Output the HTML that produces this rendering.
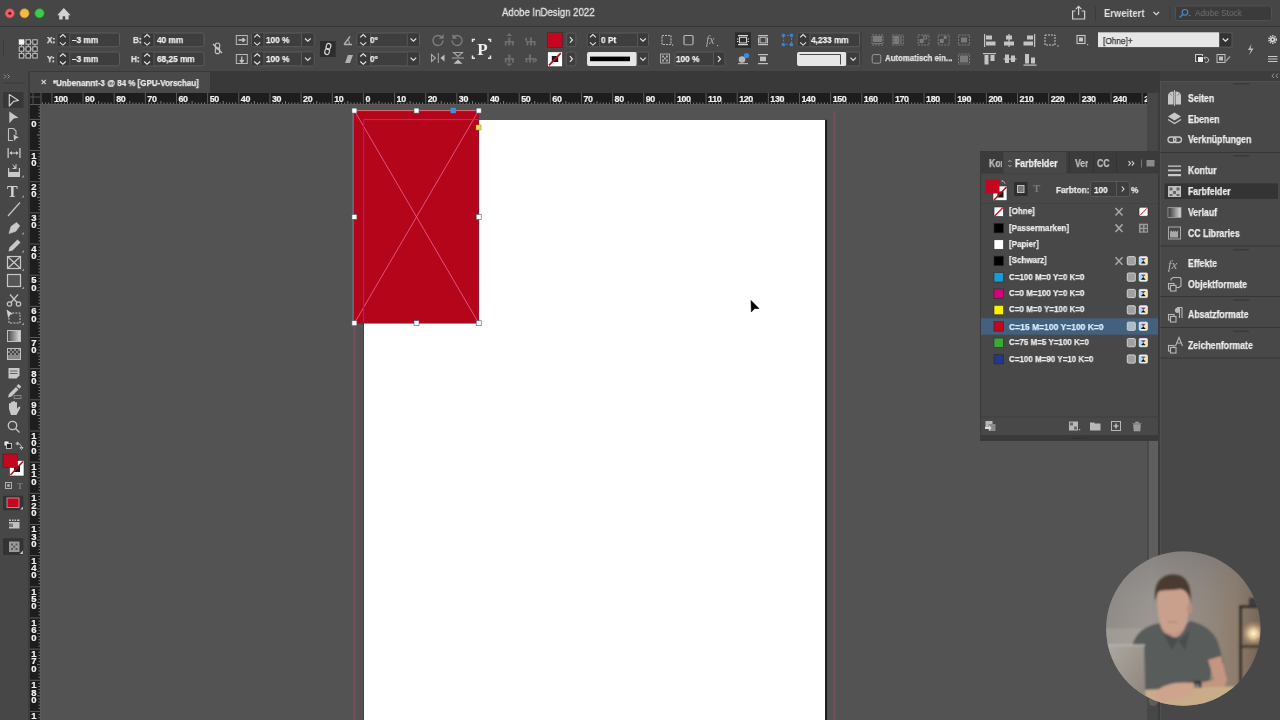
<!DOCTYPE html>
<html><head><meta charset="utf-8">
<style>
*{margin:0;padding:0;box-sizing:border-box}
html,body{width:1280px;height:720px;overflow:hidden;background:#535353;font-family:"Liberation Sans",sans-serif;color:#e8e8e8;position:relative}
.a{position:absolute}
.t{position:absolute;white-space:nowrap;line-height:1}
svg{overflow:visible;will-change:transform}
.t,.lbl{will-change:transform}
.lbl{-webkit-text-stroke:0.25px currentColor}
#title{left:0;top:0;width:1280px;height:27px;background:#464646}
#tsep{left:0;top:26px;width:1280px;height:1px;background:#353535}
#ctrl{left:0;top:27px;width:1280px;height:44px;background:#474747}
#tabrow{left:0;top:71px;width:1160px;height:22px;background:#393939}
#tab{left:30px;top:72px;width:180px;height:21px;background:#494949}
#tools{left:0;top:71px;width:28px;height:649px;background:#474747}
#tb{left:28px;top:71px;width:2px;height:649px;background:#3c3c3c}
#scroll{left:1147px;top:93px;width:13px;height:627px;background:#474747;border-right:2px solid #3c3c3c}
#thumb{left:1147.5px;top:200px;width:10.5px;height:506px;background:#5e5e5e;border-radius:5px;border-left:1px solid #4c4c4c}
#dock{left:1160px;top:71px;width:120px;height:649px;background:#3d3d3d}
#dockin{left:1160px;top:81px;width:120px;height:639px;background:#484848;border-left:1px solid #505050;border-top:1px solid #505050}
.box{position:absolute;background:#3d3d3d;border:1px solid #545454;border-radius:2px}
.lbl{position:absolute;font-size:9.5px;font-weight:bold;color:#f0f0f0;white-space:nowrap;line-height:1;transform:scaleX(.87);transform-origin:0 0}
.ico{position:absolute}
</style></head><body>
<div id="title" class="a"></div>
<div id="tsep" class="a"></div>
<div id="ctrl" class="a"></div>
<div id="tabrow" class="a"></div>
<div id="tab" class="a"></div>
<div id="tools" class="a"></div>
<div id="tb" class="a"></div>
<svg class="a" style="left:30px;top:93px" width="1117" height="12" viewBox="30 93 1117 12">
<rect x="30" y="93" width="1117" height="12" fill="#1d1d1d"/>
<rect x="30" y="104" width="1117" height="1" fill="#5a5a5a"/>
<rect x="51.40" y="93" width="1" height="12" fill="#5c5c5c"/>
<rect x="82.55" y="93" width="1" height="12" fill="#5c5c5c"/>
<rect x="113.70" y="93" width="1" height="12" fill="#5c5c5c"/>
<rect x="144.85" y="93" width="1" height="12" fill="#5c5c5c"/>
<rect x="176.00" y="93" width="1" height="12" fill="#5c5c5c"/>
<rect x="207.15" y="93" width="1" height="12" fill="#5c5c5c"/>
<rect x="238.30" y="93" width="1" height="12" fill="#5c5c5c"/>
<rect x="269.45" y="93" width="1" height="12" fill="#5c5c5c"/>
<rect x="300.60" y="93" width="1" height="12" fill="#5c5c5c"/>
<rect x="331.75" y="93" width="1" height="12" fill="#5c5c5c"/>
<rect x="362.90" y="93" width="1" height="12" fill="#5c5c5c"/>
<rect x="394.05" y="93" width="1" height="12" fill="#5c5c5c"/>
<rect x="425.20" y="93" width="1" height="12" fill="#5c5c5c"/>
<rect x="456.35" y="93" width="1" height="12" fill="#5c5c5c"/>
<rect x="487.50" y="93" width="1" height="12" fill="#5c5c5c"/>
<rect x="518.65" y="93" width="1" height="12" fill="#5c5c5c"/>
<rect x="549.80" y="93" width="1" height="12" fill="#5c5c5c"/>
<rect x="580.95" y="93" width="1" height="12" fill="#5c5c5c"/>
<rect x="612.10" y="93" width="1" height="12" fill="#5c5c5c"/>
<rect x="643.25" y="93" width="1" height="12" fill="#5c5c5c"/>
<rect x="674.40" y="93" width="1" height="12" fill="#5c5c5c"/>
<rect x="705.55" y="93" width="1" height="12" fill="#5c5c5c"/>
<rect x="736.70" y="93" width="1" height="12" fill="#5c5c5c"/>
<rect x="767.85" y="93" width="1" height="12" fill="#5c5c5c"/>
<rect x="799.00" y="93" width="1" height="12" fill="#5c5c5c"/>
<rect x="830.15" y="93" width="1" height="12" fill="#5c5c5c"/>
<rect x="861.30" y="93" width="1" height="12" fill="#5c5c5c"/>
<rect x="892.45" y="93" width="1" height="12" fill="#5c5c5c"/>
<rect x="923.60" y="93" width="1" height="12" fill="#5c5c5c"/>
<rect x="954.75" y="93" width="1" height="12" fill="#5c5c5c"/>
<rect x="985.90" y="93" width="1" height="12" fill="#5c5c5c"/>
<rect x="1017.05" y="93" width="1" height="12" fill="#5c5c5c"/>
<rect x="1048.20" y="93" width="1" height="12" fill="#5c5c5c"/>
<rect x="1079.35" y="93" width="1" height="12" fill="#5c5c5c"/>
<rect x="1110.50" y="93" width="1" height="12" fill="#5c5c5c"/>
<rect x="1141.65" y="93" width="1" height="12" fill="#5c5c5c"/>
<rect x="42.06" y="102.5" width="1" height="1.5" fill="#7a7a7a"/>
<rect x="45.17" y="102.5" width="1" height="1.5" fill="#7a7a7a"/>
<rect x="48.29" y="102.5" width="1" height="1.5" fill="#7a7a7a"/>
<rect x="54.51" y="102.5" width="1" height="1.5" fill="#7a7a7a"/>
<rect x="57.63" y="102.5" width="1" height="1.5" fill="#7a7a7a"/>
<rect x="60.75" y="102.5" width="1" height="1.5" fill="#7a7a7a"/>
<rect x="63.86" y="102.5" width="1" height="1.5" fill="#7a7a7a"/>
<rect x="66.97" y="101" width="1" height="3" fill="#7a7a7a"/>
<rect x="70.09" y="102.5" width="1" height="1.5" fill="#7a7a7a"/>
<rect x="73.20" y="102.5" width="1" height="1.5" fill="#7a7a7a"/>
<rect x="76.32" y="102.5" width="1" height="1.5" fill="#7a7a7a"/>
<rect x="79.43" y="102.5" width="1" height="1.5" fill="#7a7a7a"/>
<rect x="85.66" y="102.5" width="1" height="1.5" fill="#7a7a7a"/>
<rect x="88.78" y="102.5" width="1" height="1.5" fill="#7a7a7a"/>
<rect x="91.89" y="102.5" width="1" height="1.5" fill="#7a7a7a"/>
<rect x="95.01" y="102.5" width="1" height="1.5" fill="#7a7a7a"/>
<rect x="98.12" y="101" width="1" height="3" fill="#7a7a7a"/>
<rect x="101.24" y="102.5" width="1" height="1.5" fill="#7a7a7a"/>
<rect x="104.36" y="102.5" width="1" height="1.5" fill="#7a7a7a"/>
<rect x="107.47" y="102.5" width="1" height="1.5" fill="#7a7a7a"/>
<rect x="110.58" y="102.5" width="1" height="1.5" fill="#7a7a7a"/>
<rect x="116.81" y="102.5" width="1" height="1.5" fill="#7a7a7a"/>
<rect x="119.93" y="102.5" width="1" height="1.5" fill="#7a7a7a"/>
<rect x="123.05" y="102.5" width="1" height="1.5" fill="#7a7a7a"/>
<rect x="126.16" y="102.5" width="1" height="1.5" fill="#7a7a7a"/>
<rect x="129.27" y="101" width="1" height="3" fill="#7a7a7a"/>
<rect x="132.39" y="102.5" width="1" height="1.5" fill="#7a7a7a"/>
<rect x="135.50" y="102.5" width="1" height="1.5" fill="#7a7a7a"/>
<rect x="138.62" y="102.5" width="1" height="1.5" fill="#7a7a7a"/>
<rect x="141.73" y="102.5" width="1" height="1.5" fill="#7a7a7a"/>
<rect x="147.96" y="102.5" width="1" height="1.5" fill="#7a7a7a"/>
<rect x="151.08" y="102.5" width="1" height="1.5" fill="#7a7a7a"/>
<rect x="154.19" y="102.5" width="1" height="1.5" fill="#7a7a7a"/>
<rect x="157.31" y="102.5" width="1" height="1.5" fill="#7a7a7a"/>
<rect x="160.42" y="101" width="1" height="3" fill="#7a7a7a"/>
<rect x="163.54" y="102.5" width="1" height="1.5" fill="#7a7a7a"/>
<rect x="166.66" y="102.5" width="1" height="1.5" fill="#7a7a7a"/>
<rect x="169.77" y="102.5" width="1" height="1.5" fill="#7a7a7a"/>
<rect x="172.88" y="102.5" width="1" height="1.5" fill="#7a7a7a"/>
<rect x="179.11" y="102.5" width="1" height="1.5" fill="#7a7a7a"/>
<rect x="182.23" y="102.5" width="1" height="1.5" fill="#7a7a7a"/>
<rect x="185.34" y="102.5" width="1" height="1.5" fill="#7a7a7a"/>
<rect x="188.46" y="102.5" width="1" height="1.5" fill="#7a7a7a"/>
<rect x="191.57" y="101" width="1" height="3" fill="#7a7a7a"/>
<rect x="194.69" y="102.5" width="1" height="1.5" fill="#7a7a7a"/>
<rect x="197.81" y="102.5" width="1" height="1.5" fill="#7a7a7a"/>
<rect x="200.92" y="102.5" width="1" height="1.5" fill="#7a7a7a"/>
<rect x="204.03" y="102.5" width="1" height="1.5" fill="#7a7a7a"/>
<rect x="210.26" y="102.5" width="1" height="1.5" fill="#7a7a7a"/>
<rect x="213.38" y="102.5" width="1" height="1.5" fill="#7a7a7a"/>
<rect x="216.49" y="102.5" width="1" height="1.5" fill="#7a7a7a"/>
<rect x="219.61" y="102.5" width="1" height="1.5" fill="#7a7a7a"/>
<rect x="222.72" y="101" width="1" height="3" fill="#7a7a7a"/>
<rect x="225.84" y="102.5" width="1" height="1.5" fill="#7a7a7a"/>
<rect x="228.95" y="102.5" width="1" height="1.5" fill="#7a7a7a"/>
<rect x="232.07" y="102.5" width="1" height="1.5" fill="#7a7a7a"/>
<rect x="235.19" y="102.5" width="1" height="1.5" fill="#7a7a7a"/>
<rect x="241.41" y="102.5" width="1" height="1.5" fill="#7a7a7a"/>
<rect x="244.53" y="102.5" width="1" height="1.5" fill="#7a7a7a"/>
<rect x="247.64" y="102.5" width="1" height="1.5" fill="#7a7a7a"/>
<rect x="250.76" y="102.5" width="1" height="1.5" fill="#7a7a7a"/>
<rect x="253.87" y="101" width="1" height="3" fill="#7a7a7a"/>
<rect x="256.99" y="102.5" width="1" height="1.5" fill="#7a7a7a"/>
<rect x="260.10" y="102.5" width="1" height="1.5" fill="#7a7a7a"/>
<rect x="263.22" y="102.5" width="1" height="1.5" fill="#7a7a7a"/>
<rect x="266.33" y="102.5" width="1" height="1.5" fill="#7a7a7a"/>
<rect x="272.56" y="102.5" width="1" height="1.5" fill="#7a7a7a"/>
<rect x="275.68" y="102.5" width="1" height="1.5" fill="#7a7a7a"/>
<rect x="278.79" y="102.5" width="1" height="1.5" fill="#7a7a7a"/>
<rect x="281.91" y="102.5" width="1" height="1.5" fill="#7a7a7a"/>
<rect x="285.02" y="101" width="1" height="3" fill="#7a7a7a"/>
<rect x="288.14" y="102.5" width="1" height="1.5" fill="#7a7a7a"/>
<rect x="291.25" y="102.5" width="1" height="1.5" fill="#7a7a7a"/>
<rect x="294.37" y="102.5" width="1" height="1.5" fill="#7a7a7a"/>
<rect x="297.49" y="102.5" width="1" height="1.5" fill="#7a7a7a"/>
<rect x="303.71" y="102.5" width="1" height="1.5" fill="#7a7a7a"/>
<rect x="306.83" y="102.5" width="1" height="1.5" fill="#7a7a7a"/>
<rect x="309.94" y="102.5" width="1" height="1.5" fill="#7a7a7a"/>
<rect x="313.06" y="102.5" width="1" height="1.5" fill="#7a7a7a"/>
<rect x="316.17" y="101" width="1" height="3" fill="#7a7a7a"/>
<rect x="319.29" y="102.5" width="1" height="1.5" fill="#7a7a7a"/>
<rect x="322.40" y="102.5" width="1" height="1.5" fill="#7a7a7a"/>
<rect x="325.52" y="102.5" width="1" height="1.5" fill="#7a7a7a"/>
<rect x="328.63" y="102.5" width="1" height="1.5" fill="#7a7a7a"/>
<rect x="334.87" y="102.5" width="1" height="1.5" fill="#7a7a7a"/>
<rect x="337.98" y="102.5" width="1" height="1.5" fill="#7a7a7a"/>
<rect x="341.09" y="102.5" width="1" height="1.5" fill="#7a7a7a"/>
<rect x="344.21" y="102.5" width="1" height="1.5" fill="#7a7a7a"/>
<rect x="347.32" y="101" width="1" height="3" fill="#7a7a7a"/>
<rect x="350.44" y="102.5" width="1" height="1.5" fill="#7a7a7a"/>
<rect x="353.55" y="102.5" width="1" height="1.5" fill="#7a7a7a"/>
<rect x="356.67" y="102.5" width="1" height="1.5" fill="#7a7a7a"/>
<rect x="359.78" y="102.5" width="1" height="1.5" fill="#7a7a7a"/>
<rect x="366.01" y="102.5" width="1" height="1.5" fill="#7a7a7a"/>
<rect x="369.13" y="102.5" width="1" height="1.5" fill="#7a7a7a"/>
<rect x="372.25" y="102.5" width="1" height="1.5" fill="#7a7a7a"/>
<rect x="375.36" y="102.5" width="1" height="1.5" fill="#7a7a7a"/>
<rect x="378.47" y="101" width="1" height="3" fill="#7a7a7a"/>
<rect x="381.59" y="102.5" width="1" height="1.5" fill="#7a7a7a"/>
<rect x="384.70" y="102.5" width="1" height="1.5" fill="#7a7a7a"/>
<rect x="387.82" y="102.5" width="1" height="1.5" fill="#7a7a7a"/>
<rect x="390.93" y="102.5" width="1" height="1.5" fill="#7a7a7a"/>
<rect x="397.16" y="102.5" width="1" height="1.5" fill="#7a7a7a"/>
<rect x="400.28" y="102.5" width="1" height="1.5" fill="#7a7a7a"/>
<rect x="403.39" y="102.5" width="1" height="1.5" fill="#7a7a7a"/>
<rect x="406.51" y="102.5" width="1" height="1.5" fill="#7a7a7a"/>
<rect x="409.62" y="101" width="1" height="3" fill="#7a7a7a"/>
<rect x="412.74" y="102.5" width="1" height="1.5" fill="#7a7a7a"/>
<rect x="415.85" y="102.5" width="1" height="1.5" fill="#7a7a7a"/>
<rect x="418.97" y="102.5" width="1" height="1.5" fill="#7a7a7a"/>
<rect x="422.08" y="102.5" width="1" height="1.5" fill="#7a7a7a"/>
<rect x="428.31" y="102.5" width="1" height="1.5" fill="#7a7a7a"/>
<rect x="431.43" y="102.5" width="1" height="1.5" fill="#7a7a7a"/>
<rect x="434.54" y="102.5" width="1" height="1.5" fill="#7a7a7a"/>
<rect x="437.66" y="102.5" width="1" height="1.5" fill="#7a7a7a"/>
<rect x="440.77" y="101" width="1" height="3" fill="#7a7a7a"/>
<rect x="443.89" y="102.5" width="1" height="1.5" fill="#7a7a7a"/>
<rect x="447.00" y="102.5" width="1" height="1.5" fill="#7a7a7a"/>
<rect x="450.12" y="102.5" width="1" height="1.5" fill="#7a7a7a"/>
<rect x="453.23" y="102.5" width="1" height="1.5" fill="#7a7a7a"/>
<rect x="459.46" y="102.5" width="1" height="1.5" fill="#7a7a7a"/>
<rect x="462.58" y="102.5" width="1" height="1.5" fill="#7a7a7a"/>
<rect x="465.69" y="102.5" width="1" height="1.5" fill="#7a7a7a"/>
<rect x="468.81" y="102.5" width="1" height="1.5" fill="#7a7a7a"/>
<rect x="471.92" y="101" width="1" height="3" fill="#7a7a7a"/>
<rect x="475.04" y="102.5" width="1" height="1.5" fill="#7a7a7a"/>
<rect x="478.15" y="102.5" width="1" height="1.5" fill="#7a7a7a"/>
<rect x="481.27" y="102.5" width="1" height="1.5" fill="#7a7a7a"/>
<rect x="484.38" y="102.5" width="1" height="1.5" fill="#7a7a7a"/>
<rect x="490.61" y="102.5" width="1" height="1.5" fill="#7a7a7a"/>
<rect x="493.73" y="102.5" width="1" height="1.5" fill="#7a7a7a"/>
<rect x="496.84" y="102.5" width="1" height="1.5" fill="#7a7a7a"/>
<rect x="499.96" y="102.5" width="1" height="1.5" fill="#7a7a7a"/>
<rect x="503.07" y="101" width="1" height="3" fill="#7a7a7a"/>
<rect x="506.19" y="102.5" width="1" height="1.5" fill="#7a7a7a"/>
<rect x="509.30" y="102.5" width="1" height="1.5" fill="#7a7a7a"/>
<rect x="512.42" y="102.5" width="1" height="1.5" fill="#7a7a7a"/>
<rect x="515.53" y="102.5" width="1" height="1.5" fill="#7a7a7a"/>
<rect x="521.76" y="102.5" width="1" height="1.5" fill="#7a7a7a"/>
<rect x="524.88" y="102.5" width="1" height="1.5" fill="#7a7a7a"/>
<rect x="527.99" y="102.5" width="1" height="1.5" fill="#7a7a7a"/>
<rect x="531.11" y="102.5" width="1" height="1.5" fill="#7a7a7a"/>
<rect x="534.22" y="101" width="1" height="3" fill="#7a7a7a"/>
<rect x="537.34" y="102.5" width="1" height="1.5" fill="#7a7a7a"/>
<rect x="540.45" y="102.5" width="1" height="1.5" fill="#7a7a7a"/>
<rect x="543.57" y="102.5" width="1" height="1.5" fill="#7a7a7a"/>
<rect x="546.68" y="102.5" width="1" height="1.5" fill="#7a7a7a"/>
<rect x="552.91" y="102.5" width="1" height="1.5" fill="#7a7a7a"/>
<rect x="556.03" y="102.5" width="1" height="1.5" fill="#7a7a7a"/>
<rect x="559.14" y="102.5" width="1" height="1.5" fill="#7a7a7a"/>
<rect x="562.26" y="102.5" width="1" height="1.5" fill="#7a7a7a"/>
<rect x="565.38" y="101" width="1" height="3" fill="#7a7a7a"/>
<rect x="568.49" y="102.5" width="1" height="1.5" fill="#7a7a7a"/>
<rect x="571.61" y="102.5" width="1" height="1.5" fill="#7a7a7a"/>
<rect x="574.72" y="102.5" width="1" height="1.5" fill="#7a7a7a"/>
<rect x="577.84" y="102.5" width="1" height="1.5" fill="#7a7a7a"/>
<rect x="584.07" y="102.5" width="1" height="1.5" fill="#7a7a7a"/>
<rect x="587.18" y="102.5" width="1" height="1.5" fill="#7a7a7a"/>
<rect x="590.29" y="102.5" width="1" height="1.5" fill="#7a7a7a"/>
<rect x="593.41" y="102.5" width="1" height="1.5" fill="#7a7a7a"/>
<rect x="596.52" y="101" width="1" height="3" fill="#7a7a7a"/>
<rect x="599.64" y="102.5" width="1" height="1.5" fill="#7a7a7a"/>
<rect x="602.75" y="102.5" width="1" height="1.5" fill="#7a7a7a"/>
<rect x="605.87" y="102.5" width="1" height="1.5" fill="#7a7a7a"/>
<rect x="608.98" y="102.5" width="1" height="1.5" fill="#7a7a7a"/>
<rect x="615.21" y="102.5" width="1" height="1.5" fill="#7a7a7a"/>
<rect x="618.33" y="102.5" width="1" height="1.5" fill="#7a7a7a"/>
<rect x="621.44" y="102.5" width="1" height="1.5" fill="#7a7a7a"/>
<rect x="624.56" y="102.5" width="1" height="1.5" fill="#7a7a7a"/>
<rect x="627.67" y="101" width="1" height="3" fill="#7a7a7a"/>
<rect x="630.79" y="102.5" width="1" height="1.5" fill="#7a7a7a"/>
<rect x="633.90" y="102.5" width="1" height="1.5" fill="#7a7a7a"/>
<rect x="637.02" y="102.5" width="1" height="1.5" fill="#7a7a7a"/>
<rect x="640.13" y="102.5" width="1" height="1.5" fill="#7a7a7a"/>
<rect x="646.37" y="102.5" width="1" height="1.5" fill="#7a7a7a"/>
<rect x="649.48" y="102.5" width="1" height="1.5" fill="#7a7a7a"/>
<rect x="652.60" y="102.5" width="1" height="1.5" fill="#7a7a7a"/>
<rect x="655.71" y="102.5" width="1" height="1.5" fill="#7a7a7a"/>
<rect x="658.83" y="101" width="1" height="3" fill="#7a7a7a"/>
<rect x="661.94" y="102.5" width="1" height="1.5" fill="#7a7a7a"/>
<rect x="665.05" y="102.5" width="1" height="1.5" fill="#7a7a7a"/>
<rect x="668.17" y="102.5" width="1" height="1.5" fill="#7a7a7a"/>
<rect x="671.28" y="102.5" width="1" height="1.5" fill="#7a7a7a"/>
<rect x="677.51" y="102.5" width="1" height="1.5" fill="#7a7a7a"/>
<rect x="680.63" y="102.5" width="1" height="1.5" fill="#7a7a7a"/>
<rect x="683.74" y="102.5" width="1" height="1.5" fill="#7a7a7a"/>
<rect x="686.86" y="102.5" width="1" height="1.5" fill="#7a7a7a"/>
<rect x="689.97" y="101" width="1" height="3" fill="#7a7a7a"/>
<rect x="693.09" y="102.5" width="1" height="1.5" fill="#7a7a7a"/>
<rect x="696.20" y="102.5" width="1" height="1.5" fill="#7a7a7a"/>
<rect x="699.32" y="102.5" width="1" height="1.5" fill="#7a7a7a"/>
<rect x="702.43" y="102.5" width="1" height="1.5" fill="#7a7a7a"/>
<rect x="708.66" y="102.5" width="1" height="1.5" fill="#7a7a7a"/>
<rect x="711.78" y="102.5" width="1" height="1.5" fill="#7a7a7a"/>
<rect x="714.89" y="102.5" width="1" height="1.5" fill="#7a7a7a"/>
<rect x="718.01" y="102.5" width="1" height="1.5" fill="#7a7a7a"/>
<rect x="721.12" y="101" width="1" height="3" fill="#7a7a7a"/>
<rect x="724.24" y="102.5" width="1" height="1.5" fill="#7a7a7a"/>
<rect x="727.36" y="102.5" width="1" height="1.5" fill="#7a7a7a"/>
<rect x="730.47" y="102.5" width="1" height="1.5" fill="#7a7a7a"/>
<rect x="733.59" y="102.5" width="1" height="1.5" fill="#7a7a7a"/>
<rect x="739.81" y="102.5" width="1" height="1.5" fill="#7a7a7a"/>
<rect x="742.93" y="102.5" width="1" height="1.5" fill="#7a7a7a"/>
<rect x="746.04" y="102.5" width="1" height="1.5" fill="#7a7a7a"/>
<rect x="749.16" y="102.5" width="1" height="1.5" fill="#7a7a7a"/>
<rect x="752.27" y="101" width="1" height="3" fill="#7a7a7a"/>
<rect x="755.39" y="102.5" width="1" height="1.5" fill="#7a7a7a"/>
<rect x="758.50" y="102.5" width="1" height="1.5" fill="#7a7a7a"/>
<rect x="761.62" y="102.5" width="1" height="1.5" fill="#7a7a7a"/>
<rect x="764.73" y="102.5" width="1" height="1.5" fill="#7a7a7a"/>
<rect x="770.96" y="102.5" width="1" height="1.5" fill="#7a7a7a"/>
<rect x="774.08" y="102.5" width="1" height="1.5" fill="#7a7a7a"/>
<rect x="777.19" y="102.5" width="1" height="1.5" fill="#7a7a7a"/>
<rect x="780.31" y="102.5" width="1" height="1.5" fill="#7a7a7a"/>
<rect x="783.42" y="101" width="1" height="3" fill="#7a7a7a"/>
<rect x="786.54" y="102.5" width="1" height="1.5" fill="#7a7a7a"/>
<rect x="789.65" y="102.5" width="1" height="1.5" fill="#7a7a7a"/>
<rect x="792.77" y="102.5" width="1" height="1.5" fill="#7a7a7a"/>
<rect x="795.88" y="102.5" width="1" height="1.5" fill="#7a7a7a"/>
<rect x="802.12" y="102.5" width="1" height="1.5" fill="#7a7a7a"/>
<rect x="805.23" y="102.5" width="1" height="1.5" fill="#7a7a7a"/>
<rect x="808.35" y="102.5" width="1" height="1.5" fill="#7a7a7a"/>
<rect x="811.46" y="102.5" width="1" height="1.5" fill="#7a7a7a"/>
<rect x="814.58" y="101" width="1" height="3" fill="#7a7a7a"/>
<rect x="817.69" y="102.5" width="1" height="1.5" fill="#7a7a7a"/>
<rect x="820.81" y="102.5" width="1" height="1.5" fill="#7a7a7a"/>
<rect x="823.92" y="102.5" width="1" height="1.5" fill="#7a7a7a"/>
<rect x="827.03" y="102.5" width="1" height="1.5" fill="#7a7a7a"/>
<rect x="833.26" y="102.5" width="1" height="1.5" fill="#7a7a7a"/>
<rect x="836.38" y="102.5" width="1" height="1.5" fill="#7a7a7a"/>
<rect x="839.49" y="102.5" width="1" height="1.5" fill="#7a7a7a"/>
<rect x="842.61" y="102.5" width="1" height="1.5" fill="#7a7a7a"/>
<rect x="845.72" y="101" width="1" height="3" fill="#7a7a7a"/>
<rect x="848.84" y="102.5" width="1" height="1.5" fill="#7a7a7a"/>
<rect x="851.95" y="102.5" width="1" height="1.5" fill="#7a7a7a"/>
<rect x="855.07" y="102.5" width="1" height="1.5" fill="#7a7a7a"/>
<rect x="858.18" y="102.5" width="1" height="1.5" fill="#7a7a7a"/>
<rect x="864.41" y="102.5" width="1" height="1.5" fill="#7a7a7a"/>
<rect x="867.53" y="102.5" width="1" height="1.5" fill="#7a7a7a"/>
<rect x="870.64" y="102.5" width="1" height="1.5" fill="#7a7a7a"/>
<rect x="873.76" y="102.5" width="1" height="1.5" fill="#7a7a7a"/>
<rect x="876.88" y="101" width="1" height="3" fill="#7a7a7a"/>
<rect x="879.99" y="102.5" width="1" height="1.5" fill="#7a7a7a"/>
<rect x="883.11" y="102.5" width="1" height="1.5" fill="#7a7a7a"/>
<rect x="886.22" y="102.5" width="1" height="1.5" fill="#7a7a7a"/>
<rect x="889.33" y="102.5" width="1" height="1.5" fill="#7a7a7a"/>
<rect x="895.56" y="102.5" width="1" height="1.5" fill="#7a7a7a"/>
<rect x="898.68" y="102.5" width="1" height="1.5" fill="#7a7a7a"/>
<rect x="901.79" y="102.5" width="1" height="1.5" fill="#7a7a7a"/>
<rect x="904.91" y="102.5" width="1" height="1.5" fill="#7a7a7a"/>
<rect x="908.02" y="101" width="1" height="3" fill="#7a7a7a"/>
<rect x="911.14" y="102.5" width="1" height="1.5" fill="#7a7a7a"/>
<rect x="914.25" y="102.5" width="1" height="1.5" fill="#7a7a7a"/>
<rect x="917.37" y="102.5" width="1" height="1.5" fill="#7a7a7a"/>
<rect x="920.48" y="102.5" width="1" height="1.5" fill="#7a7a7a"/>
<rect x="926.71" y="102.5" width="1" height="1.5" fill="#7a7a7a"/>
<rect x="929.83" y="102.5" width="1" height="1.5" fill="#7a7a7a"/>
<rect x="932.94" y="102.5" width="1" height="1.5" fill="#7a7a7a"/>
<rect x="936.06" y="102.5" width="1" height="1.5" fill="#7a7a7a"/>
<rect x="939.17" y="101" width="1" height="3" fill="#7a7a7a"/>
<rect x="942.29" y="102.5" width="1" height="1.5" fill="#7a7a7a"/>
<rect x="945.40" y="102.5" width="1" height="1.5" fill="#7a7a7a"/>
<rect x="948.52" y="102.5" width="1" height="1.5" fill="#7a7a7a"/>
<rect x="951.63" y="102.5" width="1" height="1.5" fill="#7a7a7a"/>
<rect x="957.86" y="102.5" width="1" height="1.5" fill="#7a7a7a"/>
<rect x="960.98" y="102.5" width="1" height="1.5" fill="#7a7a7a"/>
<rect x="964.09" y="102.5" width="1" height="1.5" fill="#7a7a7a"/>
<rect x="967.21" y="102.5" width="1" height="1.5" fill="#7a7a7a"/>
<rect x="970.32" y="101" width="1" height="3" fill="#7a7a7a"/>
<rect x="973.44" y="102.5" width="1" height="1.5" fill="#7a7a7a"/>
<rect x="976.55" y="102.5" width="1" height="1.5" fill="#7a7a7a"/>
<rect x="979.67" y="102.5" width="1" height="1.5" fill="#7a7a7a"/>
<rect x="982.78" y="102.5" width="1" height="1.5" fill="#7a7a7a"/>
<rect x="989.01" y="102.5" width="1" height="1.5" fill="#7a7a7a"/>
<rect x="992.13" y="102.5" width="1" height="1.5" fill="#7a7a7a"/>
<rect x="995.25" y="102.5" width="1" height="1.5" fill="#7a7a7a"/>
<rect x="998.36" y="102.5" width="1" height="1.5" fill="#7a7a7a"/>
<rect x="1001.48" y="101" width="1" height="3" fill="#7a7a7a"/>
<rect x="1004.59" y="102.5" width="1" height="1.5" fill="#7a7a7a"/>
<rect x="1007.70" y="102.5" width="1" height="1.5" fill="#7a7a7a"/>
<rect x="1010.82" y="102.5" width="1" height="1.5" fill="#7a7a7a"/>
<rect x="1013.93" y="102.5" width="1" height="1.5" fill="#7a7a7a"/>
<rect x="1020.16" y="102.5" width="1" height="1.5" fill="#7a7a7a"/>
<rect x="1023.28" y="102.5" width="1" height="1.5" fill="#7a7a7a"/>
<rect x="1026.39" y="102.5" width="1" height="1.5" fill="#7a7a7a"/>
<rect x="1029.51" y="102.5" width="1" height="1.5" fill="#7a7a7a"/>
<rect x="1032.62" y="101" width="1" height="3" fill="#7a7a7a"/>
<rect x="1035.74" y="102.5" width="1" height="1.5" fill="#7a7a7a"/>
<rect x="1038.86" y="102.5" width="1" height="1.5" fill="#7a7a7a"/>
<rect x="1041.97" y="102.5" width="1" height="1.5" fill="#7a7a7a"/>
<rect x="1045.09" y="102.5" width="1" height="1.5" fill="#7a7a7a"/>
<rect x="1051.32" y="102.5" width="1" height="1.5" fill="#7a7a7a"/>
<rect x="1054.43" y="102.5" width="1" height="1.5" fill="#7a7a7a"/>
<rect x="1057.55" y="102.5" width="1" height="1.5" fill="#7a7a7a"/>
<rect x="1060.66" y="102.5" width="1" height="1.5" fill="#7a7a7a"/>
<rect x="1063.78" y="101" width="1" height="3" fill="#7a7a7a"/>
<rect x="1066.89" y="102.5" width="1" height="1.5" fill="#7a7a7a"/>
<rect x="1070.00" y="102.5" width="1" height="1.5" fill="#7a7a7a"/>
<rect x="1073.12" y="102.5" width="1" height="1.5" fill="#7a7a7a"/>
<rect x="1076.23" y="102.5" width="1" height="1.5" fill="#7a7a7a"/>
<rect x="1082.46" y="102.5" width="1" height="1.5" fill="#7a7a7a"/>
<rect x="1085.58" y="102.5" width="1" height="1.5" fill="#7a7a7a"/>
<rect x="1088.69" y="102.5" width="1" height="1.5" fill="#7a7a7a"/>
<rect x="1091.81" y="102.5" width="1" height="1.5" fill="#7a7a7a"/>
<rect x="1094.92" y="101" width="1" height="3" fill="#7a7a7a"/>
<rect x="1098.04" y="102.5" width="1" height="1.5" fill="#7a7a7a"/>
<rect x="1101.15" y="102.5" width="1" height="1.5" fill="#7a7a7a"/>
<rect x="1104.27" y="102.5" width="1" height="1.5" fill="#7a7a7a"/>
<rect x="1107.38" y="102.5" width="1" height="1.5" fill="#7a7a7a"/>
<rect x="1113.61" y="102.5" width="1" height="1.5" fill="#7a7a7a"/>
<rect x="1116.73" y="102.5" width="1" height="1.5" fill="#7a7a7a"/>
<rect x="1119.84" y="102.5" width="1" height="1.5" fill="#7a7a7a"/>
<rect x="1122.96" y="102.5" width="1" height="1.5" fill="#7a7a7a"/>
<rect x="1126.07" y="101" width="1" height="3" fill="#7a7a7a"/>
<rect x="1129.19" y="102.5" width="1" height="1.5" fill="#7a7a7a"/>
<rect x="1132.30" y="102.5" width="1" height="1.5" fill="#7a7a7a"/>
<rect x="1135.42" y="102.5" width="1" height="1.5" fill="#7a7a7a"/>
<rect x="1138.53" y="102.5" width="1" height="1.5" fill="#7a7a7a"/>
<rect x="1144.76" y="102.5" width="1" height="1.5" fill="#7a7a7a"/>
<text x="53.90" y="101.5" fill="#f2f2f2" font-size="8.9" letter-spacing="-0.35" font-weight="bold" stroke="#f2f2f2" stroke-width="0.2" font-family="Liberation Sans">100</text>
<text x="85.05" y="101.5" fill="#f2f2f2" font-size="8.9" letter-spacing="-0.35" font-weight="bold" stroke="#f2f2f2" stroke-width="0.2" font-family="Liberation Sans">90</text>
<text x="116.20" y="101.5" fill="#f2f2f2" font-size="8.9" letter-spacing="-0.35" font-weight="bold" stroke="#f2f2f2" stroke-width="0.2" font-family="Liberation Sans">80</text>
<text x="147.35" y="101.5" fill="#f2f2f2" font-size="8.9" letter-spacing="-0.35" font-weight="bold" stroke="#f2f2f2" stroke-width="0.2" font-family="Liberation Sans">70</text>
<text x="178.50" y="101.5" fill="#f2f2f2" font-size="8.9" letter-spacing="-0.35" font-weight="bold" stroke="#f2f2f2" stroke-width="0.2" font-family="Liberation Sans">60</text>
<text x="209.65" y="101.5" fill="#f2f2f2" font-size="8.9" letter-spacing="-0.35" font-weight="bold" stroke="#f2f2f2" stroke-width="0.2" font-family="Liberation Sans">50</text>
<text x="240.80" y="101.5" fill="#f2f2f2" font-size="8.9" letter-spacing="-0.35" font-weight="bold" stroke="#f2f2f2" stroke-width="0.2" font-family="Liberation Sans">40</text>
<text x="271.95" y="101.5" fill="#f2f2f2" font-size="8.9" letter-spacing="-0.35" font-weight="bold" stroke="#f2f2f2" stroke-width="0.2" font-family="Liberation Sans">30</text>
<text x="303.10" y="101.5" fill="#f2f2f2" font-size="8.9" letter-spacing="-0.35" font-weight="bold" stroke="#f2f2f2" stroke-width="0.2" font-family="Liberation Sans">20</text>
<text x="334.25" y="101.5" fill="#f2f2f2" font-size="8.9" letter-spacing="-0.35" font-weight="bold" stroke="#f2f2f2" stroke-width="0.2" font-family="Liberation Sans">10</text>
<text x="365.40" y="101.5" fill="#f2f2f2" font-size="8.9" letter-spacing="-0.35" font-weight="bold" stroke="#f2f2f2" stroke-width="0.2" font-family="Liberation Sans">0</text>
<text x="396.55" y="101.5" fill="#f2f2f2" font-size="8.9" letter-spacing="-0.35" font-weight="bold" stroke="#f2f2f2" stroke-width="0.2" font-family="Liberation Sans">10</text>
<text x="427.70" y="101.5" fill="#f2f2f2" font-size="8.9" letter-spacing="-0.35" font-weight="bold" stroke="#f2f2f2" stroke-width="0.2" font-family="Liberation Sans">20</text>
<text x="458.85" y="101.5" fill="#f2f2f2" font-size="8.9" letter-spacing="-0.35" font-weight="bold" stroke="#f2f2f2" stroke-width="0.2" font-family="Liberation Sans">30</text>
<text x="490.00" y="101.5" fill="#f2f2f2" font-size="8.9" letter-spacing="-0.35" font-weight="bold" stroke="#f2f2f2" stroke-width="0.2" font-family="Liberation Sans">40</text>
<text x="521.15" y="101.5" fill="#f2f2f2" font-size="8.9" letter-spacing="-0.35" font-weight="bold" stroke="#f2f2f2" stroke-width="0.2" font-family="Liberation Sans">50</text>
<text x="552.30" y="101.5" fill="#f2f2f2" font-size="8.9" letter-spacing="-0.35" font-weight="bold" stroke="#f2f2f2" stroke-width="0.2" font-family="Liberation Sans">60</text>
<text x="583.45" y="101.5" fill="#f2f2f2" font-size="8.9" letter-spacing="-0.35" font-weight="bold" stroke="#f2f2f2" stroke-width="0.2" font-family="Liberation Sans">70</text>
<text x="614.60" y="101.5" fill="#f2f2f2" font-size="8.9" letter-spacing="-0.35" font-weight="bold" stroke="#f2f2f2" stroke-width="0.2" font-family="Liberation Sans">80</text>
<text x="645.75" y="101.5" fill="#f2f2f2" font-size="8.9" letter-spacing="-0.35" font-weight="bold" stroke="#f2f2f2" stroke-width="0.2" font-family="Liberation Sans">90</text>
<text x="676.90" y="101.5" fill="#f2f2f2" font-size="8.9" letter-spacing="-0.35" font-weight="bold" stroke="#f2f2f2" stroke-width="0.2" font-family="Liberation Sans">100</text>
<text x="708.05" y="101.5" fill="#f2f2f2" font-size="8.9" letter-spacing="-0.35" font-weight="bold" stroke="#f2f2f2" stroke-width="0.2" font-family="Liberation Sans">110</text>
<text x="739.20" y="101.5" fill="#f2f2f2" font-size="8.9" letter-spacing="-0.35" font-weight="bold" stroke="#f2f2f2" stroke-width="0.2" font-family="Liberation Sans">120</text>
<text x="770.35" y="101.5" fill="#f2f2f2" font-size="8.9" letter-spacing="-0.35" font-weight="bold" stroke="#f2f2f2" stroke-width="0.2" font-family="Liberation Sans">130</text>
<text x="801.50" y="101.5" fill="#f2f2f2" font-size="8.9" letter-spacing="-0.35" font-weight="bold" stroke="#f2f2f2" stroke-width="0.2" font-family="Liberation Sans">140</text>
<text x="832.65" y="101.5" fill="#f2f2f2" font-size="8.9" letter-spacing="-0.35" font-weight="bold" stroke="#f2f2f2" stroke-width="0.2" font-family="Liberation Sans">150</text>
<text x="863.80" y="101.5" fill="#f2f2f2" font-size="8.9" letter-spacing="-0.35" font-weight="bold" stroke="#f2f2f2" stroke-width="0.2" font-family="Liberation Sans">160</text>
<text x="894.95" y="101.5" fill="#f2f2f2" font-size="8.9" letter-spacing="-0.35" font-weight="bold" stroke="#f2f2f2" stroke-width="0.2" font-family="Liberation Sans">170</text>
<text x="926.10" y="101.5" fill="#f2f2f2" font-size="8.9" letter-spacing="-0.35" font-weight="bold" stroke="#f2f2f2" stroke-width="0.2" font-family="Liberation Sans">180</text>
<text x="957.25" y="101.5" fill="#f2f2f2" font-size="8.9" letter-spacing="-0.35" font-weight="bold" stroke="#f2f2f2" stroke-width="0.2" font-family="Liberation Sans">190</text>
<text x="988.40" y="101.5" fill="#f2f2f2" font-size="8.9" letter-spacing="-0.35" font-weight="bold" stroke="#f2f2f2" stroke-width="0.2" font-family="Liberation Sans">200</text>
<text x="1019.55" y="101.5" fill="#f2f2f2" font-size="8.9" letter-spacing="-0.35" font-weight="bold" stroke="#f2f2f2" stroke-width="0.2" font-family="Liberation Sans">210</text>
<text x="1050.70" y="101.5" fill="#f2f2f2" font-size="8.9" letter-spacing="-0.35" font-weight="bold" stroke="#f2f2f2" stroke-width="0.2" font-family="Liberation Sans">220</text>
<text x="1081.85" y="101.5" fill="#f2f2f2" font-size="8.9" letter-spacing="-0.35" font-weight="bold" stroke="#f2f2f2" stroke-width="0.2" font-family="Liberation Sans">230</text>
<text x="1113.00" y="101.5" fill="#f2f2f2" font-size="8.9" letter-spacing="-0.35" font-weight="bold" stroke="#f2f2f2" stroke-width="0.2" font-family="Liberation Sans">240</text>
<text x="1144.15" y="101.5" fill="#f2f2f2" font-size="8.9" letter-spacing="-0.35" font-weight="bold" stroke="#f2f2f2" stroke-width="0.2" font-family="Liberation Sans">250</text>
<rect x="40.5" y="93" width="1" height="12" fill="#5c5c5c"/><rect x="32.5" y="93" width="1" height="12" fill="#555"/><rect x="30" y="96.5" width="11" height="1" fill="#555"/>
</svg>
<svg class="a" style="left:30px;top:105px" width="11" height="615" viewBox="30 105 11 615">
<rect x="30" y="105" width="11" height="615" fill="#1d1d1d"/>
<rect x="40" y="105" width="1" height="615" fill="#5a5a5a"/>
<rect x="30" y="118.90" width="11" height="1" fill="#5c5c5c"/>
<rect x="30" y="150.06" width="11" height="1" fill="#5c5c5c"/>
<rect x="30" y="181.22" width="11" height="1" fill="#5c5c5c"/>
<rect x="30" y="212.38" width="11" height="1" fill="#5c5c5c"/>
<rect x="30" y="243.54" width="11" height="1" fill="#5c5c5c"/>
<rect x="30" y="274.70" width="11" height="1" fill="#5c5c5c"/>
<rect x="30" y="305.86" width="11" height="1" fill="#5c5c5c"/>
<rect x="30" y="337.02" width="11" height="1" fill="#5c5c5c"/>
<rect x="30" y="368.18" width="11" height="1" fill="#5c5c5c"/>
<rect x="30" y="399.34" width="11" height="1" fill="#5c5c5c"/>
<rect x="30" y="430.50" width="11" height="1" fill="#5c5c5c"/>
<rect x="30" y="461.66" width="11" height="1" fill="#5c5c5c"/>
<rect x="30" y="492.82" width="11" height="1" fill="#5c5c5c"/>
<rect x="30" y="523.98" width="11" height="1" fill="#5c5c5c"/>
<rect x="30" y="555.14" width="11" height="1" fill="#5c5c5c"/>
<rect x="30" y="586.30" width="11" height="1" fill="#5c5c5c"/>
<rect x="30" y="617.46" width="11" height="1" fill="#5c5c5c"/>
<rect x="30" y="648.62" width="11" height="1" fill="#5c5c5c"/>
<rect x="30" y="679.78" width="11" height="1" fill="#5c5c5c"/>
<rect x="30" y="710.94" width="11" height="1" fill="#5c5c5c"/>
<rect x="38.5" y="106.44" width="1.5" height="1" fill="#7a7a7a"/>
<rect x="38.5" y="109.55" width="1.5" height="1" fill="#7a7a7a"/>
<rect x="38.5" y="112.67" width="1.5" height="1" fill="#7a7a7a"/>
<rect x="38.5" y="115.78" width="1.5" height="1" fill="#7a7a7a"/>
<rect x="38.5" y="122.02" width="1.5" height="1" fill="#7a7a7a"/>
<rect x="38.5" y="125.13" width="1.5" height="1" fill="#7a7a7a"/>
<rect x="38.5" y="128.25" width="1.5" height="1" fill="#7a7a7a"/>
<rect x="38.5" y="131.36" width="1.5" height="1" fill="#7a7a7a"/>
<rect x="37" y="134.48" width="3" height="1" fill="#7a7a7a"/>
<rect x="38.5" y="137.60" width="1.5" height="1" fill="#7a7a7a"/>
<rect x="38.5" y="140.71" width="1.5" height="1" fill="#7a7a7a"/>
<rect x="38.5" y="143.83" width="1.5" height="1" fill="#7a7a7a"/>
<rect x="38.5" y="146.94" width="1.5" height="1" fill="#7a7a7a"/>
<rect x="38.5" y="153.18" width="1.5" height="1" fill="#7a7a7a"/>
<rect x="38.5" y="156.29" width="1.5" height="1" fill="#7a7a7a"/>
<rect x="38.5" y="159.41" width="1.5" height="1" fill="#7a7a7a"/>
<rect x="38.5" y="162.52" width="1.5" height="1" fill="#7a7a7a"/>
<rect x="37" y="165.64" width="3" height="1" fill="#7a7a7a"/>
<rect x="38.5" y="168.76" width="1.5" height="1" fill="#7a7a7a"/>
<rect x="38.5" y="171.87" width="1.5" height="1" fill="#7a7a7a"/>
<rect x="38.5" y="174.99" width="1.5" height="1" fill="#7a7a7a"/>
<rect x="38.5" y="178.10" width="1.5" height="1" fill="#7a7a7a"/>
<rect x="38.5" y="184.34" width="1.5" height="1" fill="#7a7a7a"/>
<rect x="38.5" y="187.45" width="1.5" height="1" fill="#7a7a7a"/>
<rect x="38.5" y="190.57" width="1.5" height="1" fill="#7a7a7a"/>
<rect x="38.5" y="193.68" width="1.5" height="1" fill="#7a7a7a"/>
<rect x="37" y="196.80" width="3" height="1" fill="#7a7a7a"/>
<rect x="38.5" y="199.92" width="1.5" height="1" fill="#7a7a7a"/>
<rect x="38.5" y="203.03" width="1.5" height="1" fill="#7a7a7a"/>
<rect x="38.5" y="206.15" width="1.5" height="1" fill="#7a7a7a"/>
<rect x="38.5" y="209.26" width="1.5" height="1" fill="#7a7a7a"/>
<rect x="38.5" y="215.50" width="1.5" height="1" fill="#7a7a7a"/>
<rect x="38.5" y="218.61" width="1.5" height="1" fill="#7a7a7a"/>
<rect x="38.5" y="221.73" width="1.5" height="1" fill="#7a7a7a"/>
<rect x="38.5" y="224.84" width="1.5" height="1" fill="#7a7a7a"/>
<rect x="37" y="227.96" width="3" height="1" fill="#7a7a7a"/>
<rect x="38.5" y="231.08" width="1.5" height="1" fill="#7a7a7a"/>
<rect x="38.5" y="234.19" width="1.5" height="1" fill="#7a7a7a"/>
<rect x="38.5" y="237.31" width="1.5" height="1" fill="#7a7a7a"/>
<rect x="38.5" y="240.42" width="1.5" height="1" fill="#7a7a7a"/>
<rect x="38.5" y="246.66" width="1.5" height="1" fill="#7a7a7a"/>
<rect x="38.5" y="249.77" width="1.5" height="1" fill="#7a7a7a"/>
<rect x="38.5" y="252.89" width="1.5" height="1" fill="#7a7a7a"/>
<rect x="38.5" y="256.00" width="1.5" height="1" fill="#7a7a7a"/>
<rect x="37" y="259.12" width="3" height="1" fill="#7a7a7a"/>
<rect x="38.5" y="262.24" width="1.5" height="1" fill="#7a7a7a"/>
<rect x="38.5" y="265.35" width="1.5" height="1" fill="#7a7a7a"/>
<rect x="38.5" y="268.47" width="1.5" height="1" fill="#7a7a7a"/>
<rect x="38.5" y="271.58" width="1.5" height="1" fill="#7a7a7a"/>
<rect x="38.5" y="277.82" width="1.5" height="1" fill="#7a7a7a"/>
<rect x="38.5" y="280.93" width="1.5" height="1" fill="#7a7a7a"/>
<rect x="38.5" y="284.05" width="1.5" height="1" fill="#7a7a7a"/>
<rect x="38.5" y="287.16" width="1.5" height="1" fill="#7a7a7a"/>
<rect x="37" y="290.28" width="3" height="1" fill="#7a7a7a"/>
<rect x="38.5" y="293.40" width="1.5" height="1" fill="#7a7a7a"/>
<rect x="38.5" y="296.51" width="1.5" height="1" fill="#7a7a7a"/>
<rect x="38.5" y="299.63" width="1.5" height="1" fill="#7a7a7a"/>
<rect x="38.5" y="302.74" width="1.5" height="1" fill="#7a7a7a"/>
<rect x="38.5" y="308.98" width="1.5" height="1" fill="#7a7a7a"/>
<rect x="38.5" y="312.09" width="1.5" height="1" fill="#7a7a7a"/>
<rect x="38.5" y="315.21" width="1.5" height="1" fill="#7a7a7a"/>
<rect x="38.5" y="318.32" width="1.5" height="1" fill="#7a7a7a"/>
<rect x="37" y="321.44" width="3" height="1" fill="#7a7a7a"/>
<rect x="38.5" y="324.56" width="1.5" height="1" fill="#7a7a7a"/>
<rect x="38.5" y="327.67" width="1.5" height="1" fill="#7a7a7a"/>
<rect x="38.5" y="330.79" width="1.5" height="1" fill="#7a7a7a"/>
<rect x="38.5" y="333.90" width="1.5" height="1" fill="#7a7a7a"/>
<rect x="38.5" y="340.14" width="1.5" height="1" fill="#7a7a7a"/>
<rect x="38.5" y="343.25" width="1.5" height="1" fill="#7a7a7a"/>
<rect x="38.5" y="346.37" width="1.5" height="1" fill="#7a7a7a"/>
<rect x="38.5" y="349.48" width="1.5" height="1" fill="#7a7a7a"/>
<rect x="37" y="352.60" width="3" height="1" fill="#7a7a7a"/>
<rect x="38.5" y="355.72" width="1.5" height="1" fill="#7a7a7a"/>
<rect x="38.5" y="358.83" width="1.5" height="1" fill="#7a7a7a"/>
<rect x="38.5" y="361.95" width="1.5" height="1" fill="#7a7a7a"/>
<rect x="38.5" y="365.06" width="1.5" height="1" fill="#7a7a7a"/>
<rect x="38.5" y="371.30" width="1.5" height="1" fill="#7a7a7a"/>
<rect x="38.5" y="374.41" width="1.5" height="1" fill="#7a7a7a"/>
<rect x="38.5" y="377.53" width="1.5" height="1" fill="#7a7a7a"/>
<rect x="38.5" y="380.64" width="1.5" height="1" fill="#7a7a7a"/>
<rect x="37" y="383.76" width="3" height="1" fill="#7a7a7a"/>
<rect x="38.5" y="386.88" width="1.5" height="1" fill="#7a7a7a"/>
<rect x="38.5" y="389.99" width="1.5" height="1" fill="#7a7a7a"/>
<rect x="38.5" y="393.11" width="1.5" height="1" fill="#7a7a7a"/>
<rect x="38.5" y="396.22" width="1.5" height="1" fill="#7a7a7a"/>
<rect x="38.5" y="402.46" width="1.5" height="1" fill="#7a7a7a"/>
<rect x="38.5" y="405.57" width="1.5" height="1" fill="#7a7a7a"/>
<rect x="38.5" y="408.69" width="1.5" height="1" fill="#7a7a7a"/>
<rect x="38.5" y="411.80" width="1.5" height="1" fill="#7a7a7a"/>
<rect x="37" y="414.92" width="3" height="1" fill="#7a7a7a"/>
<rect x="38.5" y="418.04" width="1.5" height="1" fill="#7a7a7a"/>
<rect x="38.5" y="421.15" width="1.5" height="1" fill="#7a7a7a"/>
<rect x="38.5" y="424.27" width="1.5" height="1" fill="#7a7a7a"/>
<rect x="38.5" y="427.38" width="1.5" height="1" fill="#7a7a7a"/>
<rect x="38.5" y="433.62" width="1.5" height="1" fill="#7a7a7a"/>
<rect x="38.5" y="436.73" width="1.5" height="1" fill="#7a7a7a"/>
<rect x="38.5" y="439.85" width="1.5" height="1" fill="#7a7a7a"/>
<rect x="38.5" y="442.96" width="1.5" height="1" fill="#7a7a7a"/>
<rect x="37" y="446.08" width="3" height="1" fill="#7a7a7a"/>
<rect x="38.5" y="449.20" width="1.5" height="1" fill="#7a7a7a"/>
<rect x="38.5" y="452.31" width="1.5" height="1" fill="#7a7a7a"/>
<rect x="38.5" y="455.43" width="1.5" height="1" fill="#7a7a7a"/>
<rect x="38.5" y="458.54" width="1.5" height="1" fill="#7a7a7a"/>
<rect x="38.5" y="464.78" width="1.5" height="1" fill="#7a7a7a"/>
<rect x="38.5" y="467.89" width="1.5" height="1" fill="#7a7a7a"/>
<rect x="38.5" y="471.01" width="1.5" height="1" fill="#7a7a7a"/>
<rect x="38.5" y="474.12" width="1.5" height="1" fill="#7a7a7a"/>
<rect x="37" y="477.24" width="3" height="1" fill="#7a7a7a"/>
<rect x="38.5" y="480.36" width="1.5" height="1" fill="#7a7a7a"/>
<rect x="38.5" y="483.47" width="1.5" height="1" fill="#7a7a7a"/>
<rect x="38.5" y="486.59" width="1.5" height="1" fill="#7a7a7a"/>
<rect x="38.5" y="489.70" width="1.5" height="1" fill="#7a7a7a"/>
<rect x="38.5" y="495.94" width="1.5" height="1" fill="#7a7a7a"/>
<rect x="38.5" y="499.05" width="1.5" height="1" fill="#7a7a7a"/>
<rect x="38.5" y="502.17" width="1.5" height="1" fill="#7a7a7a"/>
<rect x="38.5" y="505.28" width="1.5" height="1" fill="#7a7a7a"/>
<rect x="37" y="508.40" width="3" height="1" fill="#7a7a7a"/>
<rect x="38.5" y="511.52" width="1.5" height="1" fill="#7a7a7a"/>
<rect x="38.5" y="514.63" width="1.5" height="1" fill="#7a7a7a"/>
<rect x="38.5" y="517.75" width="1.5" height="1" fill="#7a7a7a"/>
<rect x="38.5" y="520.86" width="1.5" height="1" fill="#7a7a7a"/>
<rect x="38.5" y="527.10" width="1.5" height="1" fill="#7a7a7a"/>
<rect x="38.5" y="530.21" width="1.5" height="1" fill="#7a7a7a"/>
<rect x="38.5" y="533.33" width="1.5" height="1" fill="#7a7a7a"/>
<rect x="38.5" y="536.44" width="1.5" height="1" fill="#7a7a7a"/>
<rect x="37" y="539.56" width="3" height="1" fill="#7a7a7a"/>
<rect x="38.5" y="542.68" width="1.5" height="1" fill="#7a7a7a"/>
<rect x="38.5" y="545.79" width="1.5" height="1" fill="#7a7a7a"/>
<rect x="38.5" y="548.91" width="1.5" height="1" fill="#7a7a7a"/>
<rect x="38.5" y="552.02" width="1.5" height="1" fill="#7a7a7a"/>
<rect x="38.5" y="558.26" width="1.5" height="1" fill="#7a7a7a"/>
<rect x="38.5" y="561.37" width="1.5" height="1" fill="#7a7a7a"/>
<rect x="38.5" y="564.49" width="1.5" height="1" fill="#7a7a7a"/>
<rect x="38.5" y="567.60" width="1.5" height="1" fill="#7a7a7a"/>
<rect x="37" y="570.72" width="3" height="1" fill="#7a7a7a"/>
<rect x="38.5" y="573.84" width="1.5" height="1" fill="#7a7a7a"/>
<rect x="38.5" y="576.95" width="1.5" height="1" fill="#7a7a7a"/>
<rect x="38.5" y="580.07" width="1.5" height="1" fill="#7a7a7a"/>
<rect x="38.5" y="583.18" width="1.5" height="1" fill="#7a7a7a"/>
<rect x="38.5" y="589.42" width="1.5" height="1" fill="#7a7a7a"/>
<rect x="38.5" y="592.53" width="1.5" height="1" fill="#7a7a7a"/>
<rect x="38.5" y="595.65" width="1.5" height="1" fill="#7a7a7a"/>
<rect x="38.5" y="598.76" width="1.5" height="1" fill="#7a7a7a"/>
<rect x="37" y="601.88" width="3" height="1" fill="#7a7a7a"/>
<rect x="38.5" y="605.00" width="1.5" height="1" fill="#7a7a7a"/>
<rect x="38.5" y="608.11" width="1.5" height="1" fill="#7a7a7a"/>
<rect x="38.5" y="611.23" width="1.5" height="1" fill="#7a7a7a"/>
<rect x="38.5" y="614.34" width="1.5" height="1" fill="#7a7a7a"/>
<rect x="38.5" y="620.58" width="1.5" height="1" fill="#7a7a7a"/>
<rect x="38.5" y="623.69" width="1.5" height="1" fill="#7a7a7a"/>
<rect x="38.5" y="626.81" width="1.5" height="1" fill="#7a7a7a"/>
<rect x="38.5" y="629.92" width="1.5" height="1" fill="#7a7a7a"/>
<rect x="37" y="633.04" width="3" height="1" fill="#7a7a7a"/>
<rect x="38.5" y="636.16" width="1.5" height="1" fill="#7a7a7a"/>
<rect x="38.5" y="639.27" width="1.5" height="1" fill="#7a7a7a"/>
<rect x="38.5" y="642.39" width="1.5" height="1" fill="#7a7a7a"/>
<rect x="38.5" y="645.50" width="1.5" height="1" fill="#7a7a7a"/>
<rect x="38.5" y="651.74" width="1.5" height="1" fill="#7a7a7a"/>
<rect x="38.5" y="654.85" width="1.5" height="1" fill="#7a7a7a"/>
<rect x="38.5" y="657.97" width="1.5" height="1" fill="#7a7a7a"/>
<rect x="38.5" y="661.08" width="1.5" height="1" fill="#7a7a7a"/>
<rect x="37" y="664.20" width="3" height="1" fill="#7a7a7a"/>
<rect x="38.5" y="667.32" width="1.5" height="1" fill="#7a7a7a"/>
<rect x="38.5" y="670.43" width="1.5" height="1" fill="#7a7a7a"/>
<rect x="38.5" y="673.55" width="1.5" height="1" fill="#7a7a7a"/>
<rect x="38.5" y="676.66" width="1.5" height="1" fill="#7a7a7a"/>
<rect x="38.5" y="682.90" width="1.5" height="1" fill="#7a7a7a"/>
<rect x="38.5" y="686.01" width="1.5" height="1" fill="#7a7a7a"/>
<rect x="38.5" y="689.13" width="1.5" height="1" fill="#7a7a7a"/>
<rect x="38.5" y="692.24" width="1.5" height="1" fill="#7a7a7a"/>
<rect x="37" y="695.36" width="3" height="1" fill="#7a7a7a"/>
<rect x="38.5" y="698.48" width="1.5" height="1" fill="#7a7a7a"/>
<rect x="38.5" y="701.59" width="1.5" height="1" fill="#7a7a7a"/>
<rect x="38.5" y="704.71" width="1.5" height="1" fill="#7a7a7a"/>
<rect x="38.5" y="707.82" width="1.5" height="1" fill="#7a7a7a"/>
<rect x="38.5" y="714.06" width="1.5" height="1" fill="#7a7a7a"/>
<rect x="38.5" y="717.17" width="1.5" height="1" fill="#7a7a7a"/>
<text x="34" y="127.40" fill="#f2f2f2" font-size="9.5" font-weight="bold" stroke="#f2f2f2" stroke-width="0.2" text-anchor="middle" font-family="Liberation Sans">0</text>
<text x="34" y="158.56" fill="#f2f2f2" font-size="9.5" font-weight="bold" stroke="#f2f2f2" stroke-width="0.2" text-anchor="middle" font-family="Liberation Sans">1</text>
<text x="34" y="165.86" fill="#f2f2f2" font-size="9.5" font-weight="bold" stroke="#f2f2f2" stroke-width="0.2" text-anchor="middle" font-family="Liberation Sans">0</text>
<text x="34" y="189.72" fill="#f2f2f2" font-size="9.5" font-weight="bold" stroke="#f2f2f2" stroke-width="0.2" text-anchor="middle" font-family="Liberation Sans">2</text>
<text x="34" y="197.02" fill="#f2f2f2" font-size="9.5" font-weight="bold" stroke="#f2f2f2" stroke-width="0.2" text-anchor="middle" font-family="Liberation Sans">0</text>
<text x="34" y="220.88" fill="#f2f2f2" font-size="9.5" font-weight="bold" stroke="#f2f2f2" stroke-width="0.2" text-anchor="middle" font-family="Liberation Sans">3</text>
<text x="34" y="228.18" fill="#f2f2f2" font-size="9.5" font-weight="bold" stroke="#f2f2f2" stroke-width="0.2" text-anchor="middle" font-family="Liberation Sans">0</text>
<text x="34" y="252.04" fill="#f2f2f2" font-size="9.5" font-weight="bold" stroke="#f2f2f2" stroke-width="0.2" text-anchor="middle" font-family="Liberation Sans">4</text>
<text x="34" y="259.34" fill="#f2f2f2" font-size="9.5" font-weight="bold" stroke="#f2f2f2" stroke-width="0.2" text-anchor="middle" font-family="Liberation Sans">0</text>
<text x="34" y="283.20" fill="#f2f2f2" font-size="9.5" font-weight="bold" stroke="#f2f2f2" stroke-width="0.2" text-anchor="middle" font-family="Liberation Sans">5</text>
<text x="34" y="290.50" fill="#f2f2f2" font-size="9.5" font-weight="bold" stroke="#f2f2f2" stroke-width="0.2" text-anchor="middle" font-family="Liberation Sans">0</text>
<text x="34" y="314.36" fill="#f2f2f2" font-size="9.5" font-weight="bold" stroke="#f2f2f2" stroke-width="0.2" text-anchor="middle" font-family="Liberation Sans">6</text>
<text x="34" y="321.66" fill="#f2f2f2" font-size="9.5" font-weight="bold" stroke="#f2f2f2" stroke-width="0.2" text-anchor="middle" font-family="Liberation Sans">0</text>
<text x="34" y="345.52" fill="#f2f2f2" font-size="9.5" font-weight="bold" stroke="#f2f2f2" stroke-width="0.2" text-anchor="middle" font-family="Liberation Sans">7</text>
<text x="34" y="352.82" fill="#f2f2f2" font-size="9.5" font-weight="bold" stroke="#f2f2f2" stroke-width="0.2" text-anchor="middle" font-family="Liberation Sans">0</text>
<text x="34" y="376.68" fill="#f2f2f2" font-size="9.5" font-weight="bold" stroke="#f2f2f2" stroke-width="0.2" text-anchor="middle" font-family="Liberation Sans">8</text>
<text x="34" y="383.98" fill="#f2f2f2" font-size="9.5" font-weight="bold" stroke="#f2f2f2" stroke-width="0.2" text-anchor="middle" font-family="Liberation Sans">0</text>
<text x="34" y="407.84" fill="#f2f2f2" font-size="9.5" font-weight="bold" stroke="#f2f2f2" stroke-width="0.2" text-anchor="middle" font-family="Liberation Sans">9</text>
<text x="34" y="415.14" fill="#f2f2f2" font-size="9.5" font-weight="bold" stroke="#f2f2f2" stroke-width="0.2" text-anchor="middle" font-family="Liberation Sans">0</text>
<text x="34" y="439.00" fill="#f2f2f2" font-size="9.5" font-weight="bold" stroke="#f2f2f2" stroke-width="0.2" text-anchor="middle" font-family="Liberation Sans">1</text>
<text x="34" y="446.30" fill="#f2f2f2" font-size="9.5" font-weight="bold" stroke="#f2f2f2" stroke-width="0.2" text-anchor="middle" font-family="Liberation Sans">0</text>
<text x="34" y="453.60" fill="#f2f2f2" font-size="9.5" font-weight="bold" stroke="#f2f2f2" stroke-width="0.2" text-anchor="middle" font-family="Liberation Sans">0</text>
<text x="34" y="470.16" fill="#f2f2f2" font-size="9.5" font-weight="bold" stroke="#f2f2f2" stroke-width="0.2" text-anchor="middle" font-family="Liberation Sans">1</text>
<text x="34" y="477.46" fill="#f2f2f2" font-size="9.5" font-weight="bold" stroke="#f2f2f2" stroke-width="0.2" text-anchor="middle" font-family="Liberation Sans">1</text>
<text x="34" y="484.76" fill="#f2f2f2" font-size="9.5" font-weight="bold" stroke="#f2f2f2" stroke-width="0.2" text-anchor="middle" font-family="Liberation Sans">0</text>
<text x="34" y="501.32" fill="#f2f2f2" font-size="9.5" font-weight="bold" stroke="#f2f2f2" stroke-width="0.2" text-anchor="middle" font-family="Liberation Sans">1</text>
<text x="34" y="508.62" fill="#f2f2f2" font-size="9.5" font-weight="bold" stroke="#f2f2f2" stroke-width="0.2" text-anchor="middle" font-family="Liberation Sans">2</text>
<text x="34" y="515.92" fill="#f2f2f2" font-size="9.5" font-weight="bold" stroke="#f2f2f2" stroke-width="0.2" text-anchor="middle" font-family="Liberation Sans">0</text>
<text x="34" y="532.48" fill="#f2f2f2" font-size="9.5" font-weight="bold" stroke="#f2f2f2" stroke-width="0.2" text-anchor="middle" font-family="Liberation Sans">1</text>
<text x="34" y="539.78" fill="#f2f2f2" font-size="9.5" font-weight="bold" stroke="#f2f2f2" stroke-width="0.2" text-anchor="middle" font-family="Liberation Sans">3</text>
<text x="34" y="547.08" fill="#f2f2f2" font-size="9.5" font-weight="bold" stroke="#f2f2f2" stroke-width="0.2" text-anchor="middle" font-family="Liberation Sans">0</text>
<text x="34" y="563.64" fill="#f2f2f2" font-size="9.5" font-weight="bold" stroke="#f2f2f2" stroke-width="0.2" text-anchor="middle" font-family="Liberation Sans">1</text>
<text x="34" y="570.94" fill="#f2f2f2" font-size="9.5" font-weight="bold" stroke="#f2f2f2" stroke-width="0.2" text-anchor="middle" font-family="Liberation Sans">4</text>
<text x="34" y="578.24" fill="#f2f2f2" font-size="9.5" font-weight="bold" stroke="#f2f2f2" stroke-width="0.2" text-anchor="middle" font-family="Liberation Sans">0</text>
<text x="34" y="594.80" fill="#f2f2f2" font-size="9.5" font-weight="bold" stroke="#f2f2f2" stroke-width="0.2" text-anchor="middle" font-family="Liberation Sans">1</text>
<text x="34" y="602.10" fill="#f2f2f2" font-size="9.5" font-weight="bold" stroke="#f2f2f2" stroke-width="0.2" text-anchor="middle" font-family="Liberation Sans">5</text>
<text x="34" y="609.40" fill="#f2f2f2" font-size="9.5" font-weight="bold" stroke="#f2f2f2" stroke-width="0.2" text-anchor="middle" font-family="Liberation Sans">0</text>
<text x="34" y="625.96" fill="#f2f2f2" font-size="9.5" font-weight="bold" stroke="#f2f2f2" stroke-width="0.2" text-anchor="middle" font-family="Liberation Sans">1</text>
<text x="34" y="633.26" fill="#f2f2f2" font-size="9.5" font-weight="bold" stroke="#f2f2f2" stroke-width="0.2" text-anchor="middle" font-family="Liberation Sans">6</text>
<text x="34" y="640.56" fill="#f2f2f2" font-size="9.5" font-weight="bold" stroke="#f2f2f2" stroke-width="0.2" text-anchor="middle" font-family="Liberation Sans">0</text>
<text x="34" y="657.12" fill="#f2f2f2" font-size="9.5" font-weight="bold" stroke="#f2f2f2" stroke-width="0.2" text-anchor="middle" font-family="Liberation Sans">1</text>
<text x="34" y="664.42" fill="#f2f2f2" font-size="9.5" font-weight="bold" stroke="#f2f2f2" stroke-width="0.2" text-anchor="middle" font-family="Liberation Sans">7</text>
<text x="34" y="671.72" fill="#f2f2f2" font-size="9.5" font-weight="bold" stroke="#f2f2f2" stroke-width="0.2" text-anchor="middle" font-family="Liberation Sans">0</text>
<text x="34" y="688.28" fill="#f2f2f2" font-size="9.5" font-weight="bold" stroke="#f2f2f2" stroke-width="0.2" text-anchor="middle" font-family="Liberation Sans">1</text>
<text x="34" y="695.58" fill="#f2f2f2" font-size="9.5" font-weight="bold" stroke="#f2f2f2" stroke-width="0.2" text-anchor="middle" font-family="Liberation Sans">8</text>
<text x="34" y="702.88" fill="#f2f2f2" font-size="9.5" font-weight="bold" stroke="#f2f2f2" stroke-width="0.2" text-anchor="middle" font-family="Liberation Sans">0</text>
<text x="34" y="719.44" fill="#f2f2f2" font-size="9.5" font-weight="bold" stroke="#f2f2f2" stroke-width="0.2" text-anchor="middle" font-family="Liberation Sans">1</text>
<text x="34" y="726.74" fill="#f2f2f2" font-size="9.5" font-weight="bold" stroke="#f2f2f2" stroke-width="0.2" text-anchor="middle" font-family="Liberation Sans">9</text>
</svg>
<div id="scroll" class="a"></div>
<div id="thumb" class="a"></div>
<div id="dock" class="a"></div>
<div id="dockin" class="a"></div>
<!-- bleed guides -->
<div class="a" style="left:353px;top:111px;width:483px;height:620px;border:3px solid #764a57;border-bottom:none;border-top:none"></div>
<!-- page -->
<div class="a" style="left:363px;top:119px;width:462.5px;height:610px;background:#fff;box-shadow:1px 1px 0 #1a1a1a"></div>
<div class="a" style="left:363px;top:119px;width:462.5px;height:610px;border:1px solid #7a3a74;border-bottom:none;border-left-color:#4a3a52;border-right-color:#222"></div>
<!-- red frame -->
<div class="a" style="left:354.4px;top:110.6px;width:124.3px;height:212.6px;background:#b5051a"></div>
<svg class="a" style="left:0;top:0" width="1280" height="720">
 <line x1="354.4" y1="110.6" x2="478.7" y2="110.6" stroke="#e06a7a" stroke-width="1"/>
 <line x1="354.4" y1="110.6" x2="478.7" y2="323.2" stroke="#e85a8a" stroke-width="0.9"/>
 <line x1="478.7" y1="110.6" x2="354.4" y2="323.2" stroke="#e85a8a" stroke-width="0.9"/>
 <line x1="363.6" y1="119.6" x2="363.6" y2="323.2" stroke="#a8207a" stroke-width="1.2"/>
 <line x1="363.6" y1="119.6" x2="478.7" y2="119.6" stroke="#c82a6a" stroke-width="1"/>
 <line x1="353" y1="110.6" x2="353" y2="323.2" stroke="#6a7a90" stroke-width="1"/>
 <line x1="478.7" y1="110.6" x2="478.7" y2="323.2" stroke="#7a2a40" stroke-width="0.8"/>
 <line x1="354.4" y1="323.2" x2="478.7" y2="323.2" stroke="#7a1a30" stroke-width="0.8"/>
 <g fill="#ffffff" stroke="#4a5a6a" stroke-width="0.6">
  <rect x="351.9" y="108.1" width="5" height="5"/>
  <rect x="414" y="108.1" width="5" height="5"/>
  <rect x="476.2" y="108.1" width="5" height="5"/>
  <rect x="351.9" y="214.4" width="5" height="5"/>
  <rect x="476.2" y="214.4" width="5" height="5"/>
  <rect x="351.9" y="320.7" width="5" height="5"/>
  <rect x="414" y="320.7" width="5" height="5"/>
  <rect x="476.2" y="320.7" width="5" height="5"/>
 </g>
 <rect x="450.5" y="107.8" width="5.5" height="5.5" rx="1" fill="#3b8fe0"/>
 <rect x="476" y="125" width="5" height="5" fill="#e8e040" stroke="#8a8a40" stroke-width="0.5"/>
 <!-- cursor -->
 <path d="M751 300.5 L759 308.6 L754.6 308.4 L751.4 311.9 Z" fill="#000" stroke="#000" stroke-width="0.6" stroke-linejoin="round"/>
</svg>

<svg class="a" style="left:0;top:0" width="1280" height="27">
 <circle cx="9.8" cy="13.3" r="4.6" fill="#ec6169" stroke="#c04850" stroke-width="0.6"/>
 <circle cx="9.8" cy="13.3" r="1.5" fill="#7a0a12"/>
 <circle cx="24.5" cy="13.3" r="4.6" fill="#f4b943" stroke="#c08a30" stroke-width="0.6"/>
 <circle cx="39.5" cy="13.3" r="4.6" fill="#3dcc48" stroke="#2a9a30" stroke-width="0.6"/>
 <path d="M57.2 15.2 L63.8 8 L70.6 15.2 L68.6 15.2 L68.6 19.5 L65.2 19.5 L65.2 16.3 L62.6 16.3 L62.6 19.5 L59.2 19.5 L59.2 15.2 Z" fill="#d2d2d2"/>
</svg>
<svg class="a" style="left:1000px;top:0" width="280" height="27" viewBox="1000 0 280 27">
 <g fill="none" stroke="#cfcfcf" stroke-width="1.2">
  <path d="M1075.5 11 L1072.6 11 L1072.6 19 L1084.6 19 L1084.6 11 L1081.7 11"/>
  <path d="M1078.6 15 L1078.6 6.5 M1075.8 9.2 L1078.6 6.4 L1081.4 9.2"/>
 </g>
 <rect x="1095" y="6" width="1" height="15" fill="#3c3c3c"/>
 <rect x="1169.5" y="6" width="1" height="15" fill="#3c3c3c"/>
 <path d="M1153.5 12 L1156.3 14.6 L1159.1 12" fill="none" stroke="#d8d8d8" stroke-width="1.2"/>
 <rect x="1175.5" y="6" width="96" height="14.5" rx="2" fill="#3b3b3b" stroke="#545454" stroke-width="0.8"/>
 <circle cx="1185" cy="12.3" r="2.8" fill="none" stroke="#4a86c8" stroke-width="1.2"/>
 <path d="M1183 14.3 L1179.6 17.5" stroke="#4a86c8" stroke-width="1.4"/>
 <path d="M1188.2 15.3 L1189.6 16.6 L1191 15.3" fill="#4a86c8"/>
</svg>
<div class="t" style="left:501.5px;top:6.6px;font-size:11px;color:#e4e4e4;transform:scaleX(.875);transform-origin:0 0;-webkit-text-stroke:0.3px #e4e4e4">Adobe InDesign 2022</div>
<div class="t" style="left:1104px;top:7.5px;font-size:10.5px;font-weight:bold;color:#e2e2e2;transform:scaleX(.9);transform-origin:0 0">Erweitert</div>
<div class="t" style="left:1195px;top:8px;font-size:9.5px;color:#707070;transform:scaleX(.87);transform-origin:0 0">Adobe Stock</div>

<svg class="a" style="left:0;top:27px" width="1280" height="44" viewBox="0 27 1280 44"><rect x="3" y="40" width="1" height="16" fill="#3a3a3a"/>
<rect x="18.8" y="39.3" width="5.4" height="5.4" fill="#f4f4f4"/>
<rect x="19.3" y="46.8" width="4.4" height="4.4" fill="#2e2e2e" stroke="#bdbdbd" stroke-width="1.1"/>
<rect x="19.3" y="53.599999999999994" width="4.4" height="4.4" fill="#2e2e2e" stroke="#bdbdbd" stroke-width="1.1"/>
<rect x="26.0" y="39.8" width="4.4" height="4.4" fill="#2e2e2e" stroke="#bdbdbd" stroke-width="1.1"/>
<rect x="26.0" y="46.8" width="4.4" height="4.4" fill="#2e2e2e" stroke="#bdbdbd" stroke-width="1.1"/>
<rect x="26.0" y="53.599999999999994" width="4.4" height="4.4" fill="#2e2e2e" stroke="#bdbdbd" stroke-width="1.1"/>
<rect x="32.8" y="39.8" width="4.4" height="4.4" fill="#2e2e2e" stroke="#bdbdbd" stroke-width="1.1"/>
<rect x="32.8" y="46.8" width="4.4" height="4.4" fill="#2e2e2e" stroke="#bdbdbd" stroke-width="1.1"/>
<rect x="32.8" y="53.599999999999994" width="4.4" height="4.4" fill="#2e2e2e" stroke="#bdbdbd" stroke-width="1.1"/>
<path d="M24.2 42 H25.5 M30.9 42 H32.3 M24.2 49 H25.5 M30.9 49 H32.3 M24.2 55.8 H25.5 M30.9 55.8 H32.3 M21.5 44.7 V46.3 M28.2 44.7 V46.3 M35 44.7 V46.3 M21.5 51.7 V53.1 M28.2 51.7 V53.1 M35 51.7 V53.1" stroke="#bdbdbd" stroke-width="1"/>
<rect x="57.0" y="33.0" width="62.5" height="13.700000000000003" rx="2" fill="#3e3e3e" stroke="#5c5c5c" stroke-width="1"/>
<rect x="57.5" y="33.5" width="11.700000000000003" height="12.700000000000003" fill="#383838"/>
<rect x="69.2" y="33.5" width="1" height="12.700000000000003" fill="#565656"/>
<path d="M59.9 37.4 L62.9 34.6 L65.8 37.4 M59.9 42.4 L62.9 45.1 L65.8 42.4" fill="none" stroke="#e4e4e4" stroke-width="1.1"/>
<rect x="57.0" y="52.0" width="62.5" height="13.900000000000006" rx="2" fill="#3e3e3e" stroke="#5c5c5c" stroke-width="1"/>
<rect x="57.5" y="52.5" width="11.700000000000003" height="12.900000000000006" fill="#383838"/>
<rect x="69.2" y="52.5" width="1" height="12.900000000000006" fill="#565656"/>
<path d="M59.9 56.5 L62.9 53.8 L65.8 56.5 M59.9 61.5 L62.9 64.2 L65.8 61.5" fill="none" stroke="#e4e4e4" stroke-width="1.1"/>
<rect x="141.1" y="33.0" width="63.0" height="13.700000000000003" rx="2" fill="#3e3e3e" stroke="#5c5c5c" stroke-width="1"/>
<rect x="141.6" y="33.5" width="11.900000000000006" height="12.700000000000003" fill="#383838"/>
<rect x="153.5" y="33.5" width="1" height="12.700000000000003" fill="#565656"/>
<path d="M144.1 37.4 L147.1 34.6 L150.1 37.4 M144.1 42.4 L147.1 45.1 L150.1 42.4" fill="none" stroke="#e4e4e4" stroke-width="1.1"/>
<rect x="141.1" y="52.0" width="63.0" height="13.900000000000006" rx="2" fill="#3e3e3e" stroke="#5c5c5c" stroke-width="1"/>
<rect x="141.6" y="52.5" width="11.900000000000006" height="12.900000000000006" fill="#383838"/>
<rect x="153.5" y="52.5" width="1" height="12.900000000000006" fill="#565656"/>
<path d="M144.1 56.5 L147.1 53.8 L150.1 56.5 M144.1 61.5 L147.1 64.2 L150.1 61.5" fill="none" stroke="#e4e4e4" stroke-width="1.1"/>
<g fill="none" stroke="#bdbdbd" stroke-width="1.2"><rect x="215.3" y="43" width="4.4" height="5.8" rx="2.2"/><rect x="215.3" y="47.8" width="4.4" height="5.8" rx="2.2"/></g><path d="M213 44 L222 53" stroke="#c4c4c4" stroke-width="1.3"/>
<rect x="236.3" y="35.5" width="11" height="9" fill="none" stroke="#b8b8b8" stroke-width="1"/><path d="M238.5 40 H244.5 M242.5 38 L244.8 40 L242.5 42" fill="none" stroke="#c8c8c8" stroke-width="1.3"/>
<rect x="236.3" y="54.5" width="11" height="9" fill="none" stroke="#b8b8b8" stroke-width="1"/><path d="M241.8 56.5 V62 M239.8 60 L241.8 62.2 L243.8 60" fill="none" stroke="#c8c8c8" stroke-width="1.3"/>
<rect x="251.5" y="33.0" width="62.60000000000002" height="13.700000000000003" rx="2" fill="#3e3e3e" stroke="#5c5c5c" stroke-width="1"/>
<rect x="252" y="33.5" width="11.5" height="12.700000000000003" fill="#383838"/>
<rect x="263.5" y="33.5" width="1" height="12.700000000000003" fill="#565656"/>
<path d="M254.2 37.4 L257.2 34.6 L260.2 37.4 M254.2 42.4 L257.2 45.1 L260.2 42.4" fill="none" stroke="#e4e4e4" stroke-width="1.1"/>
<rect x="301" y="33.5" width="12.600000000000023" height="12.700000000000003" fill="#3a3a3a"/>
<rect x="301" y="33.5" width="1" height="12.700000000000003" fill="#585858"/>
<rect x="251.5" y="52.0" width="62.60000000000002" height="13.900000000000006" rx="2" fill="#3e3e3e" stroke="#5c5c5c" stroke-width="1"/>
<rect x="252" y="52.5" width="11.5" height="12.900000000000006" fill="#383838"/>
<rect x="263.5" y="52.5" width="1" height="12.900000000000006" fill="#565656"/>
<path d="M254.2 56.5 L257.2 53.8 L260.2 56.5 M254.2 61.5 L257.2 64.2 L260.2 61.5" fill="none" stroke="#e4e4e4" stroke-width="1.1"/>
<rect x="301" y="52.5" width="12.600000000000023" height="12.900000000000006" fill="#3a3a3a"/>
<rect x="301" y="52.5" width="1" height="12.900000000000006" fill="#585858"/>
<path d="M305.0 38.5 L307.8 41.2 L310.6 38.5" fill="none" stroke="#e0e0e0" stroke-width="1.2"/>
<path d="M305.0 57.6 L307.8 60.4 L310.6 57.6" fill="none" stroke="#e0e0e0" stroke-width="1.2"/>
<rect x="320" y="41" width="15.7" height="16" fill="#2d2d2d"/>
<g fill="none" stroke="#d8d8d8" stroke-width="1.2" transform="rotate(15 327.8 49)"><rect x="325.6" y="43.4" width="4.4" height="6" rx="2.2"/><rect x="325.6" y="48.6" width="4.4" height="6" rx="2.2"/></g>
<path d="M344 44.5 L352 44.5 M344 44.5 L350 36.5" fill="none" stroke="#b0b0b0" stroke-width="1.3"/><path d="M347.6 39.8 a4 4 0 0 1 1.6 4.2" fill="none" stroke="#b0b0b0" stroke-width="1"/>
<path d="M345 63 L348 55 L353 55 L350 63 Z" fill="#b0b0b0"/>
<rect x="357.0" y="33.0" width="62.5" height="13.700000000000003" rx="2" fill="#3e3e3e" stroke="#5c5c5c" stroke-width="1"/>
<rect x="357.5" y="33.5" width="12.5" height="12.700000000000003" fill="#383838"/>
<rect x="370" y="33.5" width="1" height="12.700000000000003" fill="#565656"/>
<path d="M360.2 37.4 L363.2 34.6 L366.2 37.4 M360.2 42.4 L363.2 45.1 L366.2 42.4" fill="none" stroke="#e4e4e4" stroke-width="1.1"/>
<rect x="406.8" y="33.5" width="12.199999999999989" height="12.700000000000003" fill="#3a3a3a"/>
<rect x="406.8" y="33.5" width="1" height="12.700000000000003" fill="#585858"/>
<rect x="357.0" y="52.0" width="62.5" height="13.900000000000006" rx="2" fill="#3e3e3e" stroke="#5c5c5c" stroke-width="1"/>
<rect x="357.5" y="52.5" width="12.5" height="12.900000000000006" fill="#383838"/>
<rect x="370" y="52.5" width="1" height="12.900000000000006" fill="#565656"/>
<path d="M360.2 56.5 L363.2 53.8 L366.2 56.5 M360.2 61.5 L363.2 64.2 L366.2 61.5" fill="none" stroke="#e4e4e4" stroke-width="1.1"/>
<rect x="406.8" y="52.5" width="12.199999999999989" height="12.900000000000006" fill="#3a3a3a"/>
<rect x="406.8" y="52.5" width="1" height="12.900000000000006" fill="#585858"/>
<path d="M410.6 38.5 L413.4 41.2 L416.2 38.5" fill="none" stroke="#e0e0e0" stroke-width="1.2"/>
<path d="M410.6 57.6 L413.4 60.4 L416.2 57.6" fill="none" stroke="#e0e0e0" stroke-width="1.2"/>
<g fill="none" stroke="#7c7c7c" stroke-width="1.4"><path d="M441.8 37.2 a5 5 0 1 0 1.2 3.3"/><path d="M453.2 37.2 a5 5 0 1 1 -1.2 3.3"/></g>
<path d="M443.6 34 L443.6 38.8 L438.8 38.8 Z" fill="#7c7c7c"/><path d="M451.4 34 L451.4 38.8 L456.2 38.8 Z" fill="#7c7c7c" transform="translate(1,0)"/>
<path d="M431.5 54.5 L431.5 61.5 L435.5 58 Z" fill="none" stroke="#a8a8a8" stroke-width="1.1"/><rect x="437.8" y="53" width="1" height="10" fill="#a8a8a8"/><path d="M444.5 54.5 L444.5 61.5 L440.5 58 Z" fill="#bdbdbd"/>
<path d="M453.5 52.5 L462.5 52.5 L458 56.5 Z" fill="none" stroke="#a8a8a8" stroke-width="1.1"/><rect x="452" y="57.5" width="12" height="1" fill="#a8a8a8"/><path d="M453.5 63.8 L462.5 63.8 L458 59.5 Z" fill="#bdbdbd"/>
<path d="M472.5 42 V39.5 H475 M488 39.5 H490.5 V42 M472.5 55.5 V58.3 H475 M488 58.3 H490.5 V55.5" fill="none" stroke="#e8e8e8" stroke-width="1.5"/>
<text x="477.3" y="54.8" font-family="Liberation Serif" font-weight="bold" font-size="17" fill="#f0f0f0">P</text>
<g fill="#6e6e6e"><rect x="508.3" y="37.5" width="2" height="4"/><rect x="504.8" y="41" width="9" height="1.6"/><rect x="504.8" y="41" width="1.8" height="4.5"/><rect x="512.0" y="41" width="1.8" height="4.5"/><rect x="508.3" y="41" width="2" height="4.5"/></g>
<path d="M506.3 36 L509.3 33 L512.3 36 Z" fill="#6e6e6e"/>
<g fill="#6e6e6e"><rect x="530" y="37.5" width="2" height="4"/><rect x="526.5" y="41" width="9" height="1.6"/><rect x="526.5" y="41" width="1.8" height="4.5"/><rect x="533.7" y="41" width="1.8" height="4.5"/><rect x="530" y="41" width="2" height="4.5"/></g>
<path d="M524.5 39.5 L527 37 L527 42 Z" fill="#6e6e6e"/>
<g fill="#6e6e6e"><rect x="508.3" y="54.5" width="2" height="4"/><rect x="504.8" y="58" width="9" height="1.6"/><rect x="504.8" y="58" width="1.8" height="4.5"/><rect x="512.0" y="58" width="1.8" height="4.5"/><rect x="508.3" y="58" width="2" height="4.5"/></g>
<path d="M506.3 63.5 L509.3 66.3 L512.3 63.5 Z" fill="#6e6e6e"/>
<g fill="#6e6e6e"><rect x="529" y="54.5" width="2" height="4"/><rect x="525.5" y="58" width="9" height="1.6"/><rect x="525.5" y="58" width="1.8" height="4.5"/><rect x="532.7" y="58" width="1.8" height="4.5"/><rect x="529" y="58" width="2" height="4.5"/></g>
<path d="M537.5 60 L535 57.5 L535 62.5 Z" fill="#6e6e6e"/>
<rect x="547.7" y="32.5" width="15" height="15" fill="#c4061f" stroke="#303030" stroke-width="0.6"/>
<rect x="547.5" y="51.8" width="15" height="15" fill="#ffffff" stroke="#222" stroke-width="0.6"/><rect x="551.8" y="56" width="6.4" height="6" fill="#1a1a1a"/><path d="M549 65.3 L560.8 53.2" stroke="#b01020" stroke-width="1.7"/>
<rect x="566.3" y="33.0" width="9.600000000000023" height="13.700000000000003" rx="2" fill="#3e3e3e" stroke="#5c5c5c" stroke-width="1"/>
<path d="M569.9 37.1 L572.5 39.9 L569.9 42.6" fill="none" stroke="#e0e0e0" stroke-width="1.2"/>
<rect x="566.3" y="52.0" width="9.600000000000023" height="13.900000000000006" rx="2" fill="#3e3e3e" stroke="#5c5c5c" stroke-width="1"/>
<path d="M569.9 56.2 L572.5 59.0 L569.9 61.8" fill="none" stroke="#e0e0e0" stroke-width="1.2"/>
<rect x="587.2" y="33.0" width="61.299999999999955" height="13.700000000000003" rx="2" fill="#3e3e3e" stroke="#5c5c5c" stroke-width="1"/>
<rect x="587.7" y="33.5" width="11.299999999999955" height="12.700000000000003" fill="#383838"/>
<rect x="599" y="33.5" width="1" height="12.700000000000003" fill="#565656"/>
<path d="M589.9 37.4 L592.9 34.6 L595.9 37.4 M589.9 42.4 L592.9 45.1 L595.9 42.4" fill="none" stroke="#e4e4e4" stroke-width="1.1"/>
<rect x="637" y="33.5" width="11" height="12.700000000000003" fill="#3a3a3a"/>
<rect x="637" y="33.5" width="1" height="12.700000000000003" fill="#585858"/>
<path d="M640.2 38.5 L643.0 41.2 L645.8 38.5" fill="none" stroke="#e0e0e0" stroke-width="1.2"/>
<rect x="587" y="52.0" width="50" height="13.900000000000006" rx="2" fill="#e6e6e6"/><rect x="637" y="52.0" width="11.5" height="13.900000000000006" rx="1" fill="#3c3c3c" stroke="#585858" stroke-width="1"/>
<rect x="590" y="56.6" width="40" height="4.6" fill="#000"/>
<path d="M640.2 57.6 L643.0 60.4 L645.8 57.6" fill="none" stroke="#e0e0e0" stroke-width="1.2"/>
<rect x="662" y="35.5" width="9" height="9" fill="none" stroke="#b8b8b8" stroke-width="1.1" stroke-dasharray="2 1"/><rect x="672" y="44.5" width="1.2" height="1.2" fill="#b8b8b8"/>
<rect x="684" y="35.5" width="9" height="9" rx="1" fill="none" stroke="#b8b8b8" stroke-width="1.2"/><rect x="684.5" y="44" width="8.5" height="1.4" fill="#8a8a8a"/>
<rect x="717" y="45" width="1.2" height="1.2" fill="#a8a8a8"/>
<rect x="660.5" y="54" width="9" height="9" fill="none" stroke="#aaaaaa" stroke-width="1"/><path d="M662 55.5 h2 v2 h-2z M666 55.5 h2 v2 h-2z M664 57.5 h2 v2 h-2z M662 59.5 h2 v2 h-2z M666 59.5 h2 v2 h-2z" fill="#aaaaaa"/>
<rect x="674.9" y="52.0" width="49.89999999999998" height="13.900000000000006" rx="2" fill="#3e3e3e" stroke="#5c5c5c" stroke-width="1"/>
<rect x="713" y="52.5" width="11.299999999999955" height="12.900000000000006" fill="#3a3a3a"/>
<rect x="713" y="52.5" width="1" height="12.900000000000006" fill="#585858"/>
<path d="M717.9 56.2 L720.5 59.0 L717.9 61.8" fill="none" stroke="#e0e0e0" stroke-width="1.2"/>
<rect x="735" y="32.3" width="16" height="15.5" fill="#2c2c2c"/>
<g fill="#d8d8d8"><rect x="738" y="35" width="10" height="1.2"/><rect x="738" y="44" width="10" height="1.2"/><rect x="739.5" y="37.3" width="7" height="5.6" fill="none" stroke="#d8d8d8" stroke-width="1"/><rect x="737" y="38.5" width="1.5" height="1"/><rect x="747.5" y="38.5" width="1.5" height="1"/><rect x="737" y="41" width="1.5" height="1"/><rect x="747.5" y="41" width="1.5" height="1"/></g>
<g fill="#c0c0c0"><rect x="758" y="35" width="10" height="1.2"/><rect x="758" y="44" width="10" height="1.2"/><rect x="760" y="37.3" width="6" height="5.6" fill="none" stroke="#c0c0c0" stroke-width="1"/><rect x="758" y="37.5" width="1" height="6"/><rect x="767" y="37.5" width="1" height="6"/></g>
<g fill="#b0b0b0"><rect x="738" y="63" width="10" height="1.2"/><circle cx="742" cy="59.5" r="3.3" fill="#b8b8b8"/></g><circle cx="746.5" cy="55.6" r="2.7" fill="#3a8be0"/>
<g fill="#c0c0c0"><rect x="758" y="54" width="10" height="1.2"/><rect x="758" y="63" width="10" height="1.2"/><rect x="760" y="56.6" width="6" height="4.6"/></g>
<g fill="none" stroke="#3b82d0" stroke-width="1"><rect x="783.5" y="35.5" width="8" height="9" stroke-dasharray="2 1.5"/></g><g fill="#3b82d0"><rect x="781.8" y="33.8" width="3" height="3"/><rect x="790" y="33.8" width="3" height="3"/><rect x="781.8" y="43.2" width="3" height="3"/><rect x="790" y="43.2" width="3" height="3"/></g>
<rect x="797.25" y="33.0" width="62.25" height="13.700000000000003" rx="2" fill="#3e3e3e" stroke="#5c5c5c" stroke-width="1"/>
<rect x="797.75" y="33.5" width="11.75" height="12.700000000000003" fill="#383838"/>
<rect x="809.5" y="33.5" width="1" height="12.700000000000003" fill="#565656"/>
<path d="M800.1 37.4 L803.1 34.6 L806.1 37.4 M800.1 42.4 L803.1 45.1 L806.1 42.4" fill="none" stroke="#e4e4e4" stroke-width="1.1"/>
<rect x="797" y="52.0" width="49.5" height="13.900000000000006" rx="2" fill="#e6e6e6"/><rect x="846.5" y="52.0" width="13" height="13.900000000000006" rx="1" fill="#3c3c3c" stroke="#585858" stroke-width="1"/>
<path d="M799.5 54.5 H840.5 V64.5" fill="none" stroke="#4a4a4a" stroke-width="1"/>
<path d="M850.5 57.6 L853.2 60.4 L856.0 57.6" fill="none" stroke="#e0e0e0" stroke-width="1.2"/>
<rect x="860.5" y="33" width="1" height="32" fill="#3b3b3b"/>
<rect x="872.2" y="54.6" width="8.6" height="8.6" rx="1.5" fill="none" stroke="#9a9a9a" stroke-width="1"/>
<g fill="#7a7a7a"><rect x="872.0" y="35" width="11" height="10" fill="none" stroke="#7a7a7a" stroke-width="1" stroke-dasharray="2 1"/><rect x="873.0" y="36" width="9" height="6"/><rect x="873.0" y="43" width="9" height="1"/></g>
<g fill="#7a7a7a"><rect x="892.3" y="35" width="11" height="10" fill="none" stroke="#7a7a7a" stroke-width="1" stroke-dasharray="2 1"/><rect x="893.3" y="36" width="6" height="8"/><rect x="900.3" y="36" width="1.2" height="8"/></g>
<g fill="#7a7a7a"><rect x="918.1" y="35" width="11" height="10" fill="none" stroke="#7a7a7a" stroke-width="1" stroke-dasharray="2 1"/><rect x="919.6" y="39" width="4" height="4"/><rect x="923.6" y="36" width="3" height="3" fill="none" stroke="#7a7a7a" stroke-width="1"/></g>
<g fill="#7a7a7a"><rect x="938.2" y="35" width="11" height="10" fill="none" stroke="#7a7a7a" stroke-width="1" stroke-dasharray="2 1"/><rect x="939.7" y="39" width="4" height="4"/><rect x="943.7" y="36" width="3" height="3"/></g>
<g fill="#7a7a7a"><rect x="958.5" y="35" width="11" height="10" fill="none" stroke="#7a7a7a" stroke-width="1" stroke-dasharray="2 1"/><rect x="961" y="37.5" width="6" height="5"/></g>
<g fill="#7a7a7a"><rect x="958.5" y="54" width="11" height="10" fill="none" stroke="#7a7a7a" stroke-width="1" stroke-dasharray="2 1"/><rect x="960" y="55.5" width="8" height="7"/></g>
<g fill="#c4c4c4"><rect x="984" y="34" width="1.2" height="13"/><rect x="986" y="35.5" width="6" height="4"/><rect x="986" y="41.5" width="9.5" height="4"/></g>
<g fill="#c4c4c4"><rect x="1008.4" y="34" width="1.2" height="13"/><rect x="1006" y="35.5" width="6" height="4"/><rect x="1004" y="41.5" width="10" height="4"/></g>
<g fill="#c4c4c4"><rect x="1034" y="34" width="1.2" height="13"/><rect x="1027" y="35.5" width="6" height="4"/><rect x="1023.5" y="41.5" width="9.5" height="4"/></g>
<g fill="none" stroke="#c4c4c4" stroke-width="1"><rect x="1045" y="35" width="10" height="10" stroke-dasharray="2 1"/></g><path d="M1057 45.5 L1059 45.5 L1058 47 Z" fill="#c4c4c4"/>
<g fill="#c4c4c4"><rect x="983" y="53" width="13" height="1.2"/><rect x="984.5" y="55" width="4" height="9.5"/><rect x="990.5" y="55" width="4" height="6"/></g>
<g fill="#c4c4c4"><rect x="1003.5" y="58.4" width="13" height="1.2"/><rect x="1005" y="54.5" width="4" height="8.5"/><rect x="1011" y="55.5" width="4" height="6.5"/></g>
<g fill="#c4c4c4"><rect x="1023.5" y="64.5" width="13" height="1.2"/><rect x="1025" y="54" width="4" height="9.5"/><rect x="1031" y="57.5" width="4" height="6"/></g>
<g fill="none" stroke="#c8c8c8" stroke-width="1.1"><rect x="1077" y="35.5" width="8" height="8"/></g><rect x="1079" y="37.5" width="4" height="4" fill="#c8c8c8"/><rect x="1087" y="44" width="1.2" height="1.2" fill="#c8c8c8"/>
<rect x="1098" y="32.3" width="121" height="14.8" fill="#e6e6e6"/><rect x="1219.5" y="32.8" width="12.5" height="14.3" fill="#333" stroke="#5a5a5a" stroke-width="1"/>
<path d="M1222.7 38.5 L1225.5 41.2 L1228.3 38.5" fill="none" stroke="#e8e8e8" stroke-width="1.2"/>
<rect x="1195.5" y="54.5" width="7" height="7" fill="none" stroke="#c8c8c8" stroke-width="1"/><rect x="1197.5" y="56.5" width="6" height="6" fill="#f0f0f0" stroke="#222" stroke-width="0.8"/><path d="M1205 58 a2.4 2.4 0 1 1 0 4 M1205 56.6 L1203.8 58 L1205.4 59" fill="none" stroke="#c0c0c0" stroke-width="1"/>
<rect x="1217" y="54.5" width="8" height="8" fill="none" stroke="#c0c0c0" stroke-width="1"/><rect x="1219" y="56.5" width="4" height="4" fill="#c0c0c0"/><path d="M1226 61 L1230 56.5" stroke="#a0a0a0" stroke-width="1.3"/>
<path d="M1251.5 44 L1248 50 L1251 50 L1249 55.5 L1253.5 48.5 L1250.5 48.5 Z" fill="#c0c0c0"/>
<circle cx="1272.6" cy="39.5" r="3.6" fill="none" stroke="#d4d4d4" stroke-width="1.6" stroke-dasharray="1.4 0.9"/><circle cx="1272.6" cy="39.5" r="2.6" fill="#d4d4d4"/><circle cx="1272.6" cy="39.5" r="0.9" fill="#333"/>
<path d="M1268 56.5 H1277.5 M1268 59 H1277.5 M1268 61.5 H1277.5" stroke="#c8c8c8" stroke-width="1"/></svg>
<div class="lbl" style="left:47px;top:35.4px;font-size:9.5px;color:#e0e0e0;font-weight:bold">X:</div>
<div class="lbl" style="left:47px;top:54.4px;font-size:9.5px;color:#e0e0e0;font-weight:bold">Y:</div>
<div class="lbl" style="left:72px;top:35.3px">–3 mm</div>
<div class="lbl" style="left:72px;top:54.3px">–3 mm</div>
<div class="lbl" style="left:132.5px;top:35.4px;font-size:9.5px;color:#e0e0e0;font-weight:bold">B:</div>
<div class="lbl" style="left:131px;top:54.4px;font-size:9.5px;color:#e0e0e0;font-weight:bold">H:</div>
<div class="lbl" style="left:156.5px;top:35.3px">40 mm</div>
<div class="lbl" style="left:156.5px;top:54.3px">68,25 mm</div>
<div class="lbl" style="left:265.5px;top:35.3px">100 %</div>
<div class="lbl" style="left:265.5px;top:54.3px">100 %</div>
<div class="lbl" style="left:370px;top:35.3px">0°</div>
<div class="lbl" style="left:370px;top:54.3px">0°</div>
<div class="lbl" style="left:601px;top:35.3px">0 Pt</div>
<div class="t" style="left:706px;top:34px;font-family:'Liberation Serif',serif;font-style:italic;font-size:12px;color:#a8a8a8">fx</div>
<div class="lbl" style="left:676px;top:54.3px">100 %</div>
<div class="lbl" style="left:811px;top:35.3px">4,233 mm</div>
<div class="lbl" style="left:885px;top:54.4px;font-size:9.0px;color:#e6e6e6;font-weight:bold">Automatisch ein...</div>
<div class="lbl" style="left:1103px;top:35.8px;color:#303030;font-weight:normal;font-size:9.5px">[Ohne]+</div>
<div class="t" style="left:30px;top:0;width:0"></div>
<svg class="a" style="left:0;top:71px" width="30" height="649" viewBox="0 71 30 649">
 <path d="M4 74.5 L6 76.5 L4 78.5 M7.5 74.5 L9.5 76.5 L7.5 78.5" fill="none" stroke="#9a9a9a" stroke-width="0.9"/>
 <rect x="3" y="82.5" width="22" height="1" fill="#3a3a3a"/>
 <rect x="3" y="92" width="20.5" height="16" rx="1" fill="#383838"/>
 <g fill="none" stroke="#cfcfcf" stroke-width="1.2" stroke-linejoin="round">
  <path d="M9.3 94.5 L18.5 100.5 L13.7 101.3 L9.3 106 Z"/>
 </g>
 <path d="M9.3 111.5 L18.5 117.8 L13.7 118.6 L9.3 123.2 Z" fill="#c8c8c8"/>
 <!-- page tool -->
 <g fill="none" stroke="#c0c0c0" stroke-width="1.1"><path d="M8.5 128.5 H13.5 L16 131 V135 M8.5 128.5 V140.5 H13"/></g>
 <path d="M13.5 134.5 L19 137.5 L16.3 138.2 L14.2 141 Z" fill="#c8c8c8"/>
 <!-- gap tool -->
 <g fill="#c8c8c8"><rect x="7.5" y="148" width="1.3" height="10"/><rect x="19.3" y="148" width="1.3" height="10"/><rect x="10" y="152.5" width="8" height="1.1"/><path d="M9.5 153 L12 151 V155Z M18.5 153 L16 151 V155Z"/></g>
 <!-- content collector -->
 <g fill="#c8c8c8"><rect x="8" y="172" width="12" height="5"/><rect x="8" y="168" width="1.2" height="5"/><rect x="18.8" y="168" width="1.2" height="5"/><path d="M12 163.5 L15.5 167 L15.5 164 L16.5 164 L16.5 169 L12.5 169 L12.5 168 L14.5 168 Z"/></g>
 <path d="M21.5 177.5 L24 177.5 L24 175 Z" fill="#9a9a9a"/>
 <!-- type -->
 <text x="7" y="197" font-family="Liberation Serif" font-size="16" font-weight="bold" fill="#d0d0d0">T</text>
 <path d="M21.5 197.5 L24 197.5 L24 195 Z" fill="#9a9a9a"/>
 <!-- line -->
 <path d="M8 216 L20 202.5" stroke="#c8c8c8" stroke-width="1.2"/>
 <!-- pen -->
 <path d="M9 233.5 L11 226.5 L16.5 222.5 L19.8 225.8 L15.8 231.3 L9 233.5 Z M12.5 230.2 L14.2 228.5" fill="#c8c8c8" stroke="#c8c8c8" stroke-width="0.6"/>
 <path d="M21.5 234.5 L24 234.5 L24 232 Z" fill="#9a9a9a"/>
 <!-- pencil -->
 <path d="M8.5 251.5 L9.5 247.5 L17.5 239.5 L20.5 242.5 L12.5 250.5 Z" fill="#c8c8c8"/>
 <path d="M21.5 252.5 L24 252.5 L24 250 Z" fill="#9a9a9a"/>
 <!-- rect frame -->
 <g fill="none" stroke="#c8c8c8" stroke-width="1.2"><rect x="7.5" y="256.5" width="13" height="12"/><path d="M7.5 256.5 L20.5 268.5 M20.5 256.5 L7.5 268.5"/></g>
 <path d="M21.5 271 L24 271 L24 268.5 Z" fill="#9a9a9a"/>
 <!-- rectangle -->
 <rect x="7.5" y="274.5" width="13" height="12" fill="#555" stroke="#c8c8c8" stroke-width="1.2"/>
 <path d="M21.5 289 L24 289 L24 286.5 Z" fill="#9a9a9a"/>
 <!-- scissors -->
 <g fill="none" stroke="#c8c8c8" stroke-width="1.2"><circle cx="9.5" cy="304" r="2.2"/><circle cx="18.5" cy="304" r="2.2"/><path d="M11 302.5 L18 294.5 M17 302.5 L10 294.5"/></g>
 <!-- free transform -->
 <g fill="none" stroke="#c8c8c8" stroke-width="1"><rect x="9" y="313" width="11" height="10" stroke-dasharray="2 1.2"/></g>
 <path d="M6.5 309.5 L13 314 L10 314.7 L8.2 318 Z" fill="#d0d0d0"/>
 <path d="M21.5 325 L24 325 L24 322.5 Z" fill="#9a9a9a"/>
 <!-- gradient swatch -->
 <defs><linearGradient id="gr1" x1="0" x2="1"><stop offset="0" stop-color="#444"/><stop offset="1" stop-color="#e0e0e0"/></linearGradient></defs>
 <rect x="7.5" y="330.5" width="13" height="11" fill="url(#gr1)" stroke="#c0c0c0" stroke-width="1"/>
 <!-- gradient feather -->
 <rect x="7.5" y="348.5" width="13" height="11" fill="#888" stroke="#c0c0c0" stroke-width="1"/>
 <path d="M8 349 h2v2h-2z M12 349 h2v2h-2z M16 349 h2v2h-2z M10 351 h2v2h-2z M14 351 h2v2h-2z M18 351 h2v2h-2z M8 353 h2v2h-2z M12 353 h2v2h-2z M16 353 h2v2h-2z" fill="#444"/>
 <!-- note -->
 <path d="M8.5 368 H19.5 V375.5 L16.5 378.5 H8.5 Z" fill="#c8c8c8"/>
 <path d="M10 371 H17.5 M10 373.5 H17.5" stroke="#555" stroke-width="0.9"/>
 <!-- eyedropper -->
 <path d="M8 397.5 L9 394 L16 387 L18.5 389.5 L11.5 396.5 Z" fill="#c8c8c8"/>
 <path d="M16.5 386 L18.5 384 L21.3 386.8 L19.3 388.8 Z" fill="#c8c8c8"/>
 <path d="M14 395.5 h7 v3 h-7z" fill="none" stroke="#a0a0a0" stroke-width="0.7"/>
 <!-- hand -->
 <path d="M9 409 L9 404 a1 1 0 0 1 2 0 L11 402.5 a1 1 0 0 1 2 0 L13 402 a1 1 0 0 1 2 0 L15 403 a1 1 0 0 1 2 0 L17 409 L18.5 407 a1 1 0 0 1 1.6 1.2 L16.5 415 H11 Z" fill="#c8c8c8"/>
 <!-- zoom -->
 <g fill="none" stroke="#c8c8c8" stroke-width="1.3"><circle cx="12.5" cy="425.5" r="4.2"/><path d="M15.5 428.5 L19.5 432.5"/></g>
 <!-- swap / default -->
 <rect x="4" y="441" width="5" height="5" fill="#f0f0f0" stroke="#333" stroke-width="0.8"/><rect x="6.5" y="443.5" width="5" height="5" fill="#222" stroke="#ddd" stroke-width="0.8"/>
 <path d="M17 443.5 a4 4 0 0 1 4.5 4.5 M15.8 443.5 L18 442 L18 445 Z M21.5 449.5 L20 447.5 L23 447.5 Z" fill="none" stroke="#c0c0c0" stroke-width="1"/>
 <!-- fill/stroke -->
 <rect x="9.5" y="460.5" width="14.5" height="15.5" fill="#fff" stroke="#333" stroke-width="0.6"/>
 <rect x="14" y="466" width="6" height="6" fill="#1a1a1a"/>
 <path d="M10.5 475 L23 461.5" stroke="#b01020" stroke-width="1.6"/>
 <rect x="3" y="454" width="14.5" height="13.5" fill="#c4061f" stroke="#2a2a2a" stroke-width="0.6"/>
 <!-- format -->
 <rect x="5.5" y="482.5" width="6" height="6" fill="none" stroke="#b0b0b0" stroke-width="1"/><rect x="7.2" y="484.2" width="2.6" height="2.6" fill="#b0b0b0"/>
 <text x="17" y="489" font-family="Liberation Serif" font-size="9" font-weight="bold" fill="#7a7a7a">T</text>
 <!-- apply color -->
 <rect x="3" y="495.8" width="20.3" height="14.5" rx="1" fill="#333333"/>
 <rect x="7" y="498" width="12" height="9.5" fill="#c4061f" stroke="#d8a0a0" stroke-width="0.8"/>
 <path d="M20 509.5 L23 509.5 L23 506.5 Z" fill="#c0c0c0"/>
 <!-- normal view -->
 <g fill="#c0c0c0"><rect x="9" y="522" width="10.5" height="6.5"/><path d="M9 519.5 h2 v1.5 h-2z M12 519.5 h1.5 v1.5 h-1.5z M14.5 519.5 h1.5 v1.5 h-1.5z M17 519.5 h2.5 v1.5 h-2.5z"/></g>
 <rect x="9" y="523.5" width="4" height="3.5" fill="#777"/>
 <!-- screen mode -->
 <rect x="3" y="538.3" width="20.3" height="16.7" rx="1" fill="#333333"/>
 <rect x="9" y="541.5" width="10.5" height="10.5" fill="#9a9a9a"/>
 <path d="M11 543.5 h2v2h-2z M15.5 543.5 h2v2h-2z M11 548 h2v2h-2z M15.5 548 h2v2h-2z M13.2 545.8 h2v2h-2z" fill="#5a5a5a"/>
 <path d="M19.5 554 L23 554 L23 550.5 Z" fill="#c0c0c0"/>
</svg>
<div class="a" style="left:30px;top:72px;width:180px;height:21px;"></div>
<svg class="a" style="left:40px;top:79px" width="10" height="10"><path d="M1.6 1 L5.8 5.2 M5.8 1 L1.6 5.2" stroke="#d8d8d8" stroke-width="1.1"/></svg>
<div class="lbl" style="left:53px;top:78.5px;font-size:9.2px;color:#e8e8e8">*Unbenannt-3 @ 84 % [GPU-Vorschau]</div>

<svg class="a" style="left:1160px;top:71px" width="120" height="649" viewBox="1160 71 120 649">
 <path d="M1274 73.5 L1272 75.8 L1274 78 M1278 73.5 L1276 75.8 L1278 78" fill="none" stroke="#a0a0a0" stroke-width="0.9"/>
 <rect x="1233" y="83" width="16" height="1.5" fill="#3a3a3a"/>
 <rect x="1160" y="152" width="120" height="1" fill="#363636"/>
 <rect x="1233" y="155" width="16" height="1.5" fill="#3a3a3a"/>
 <rect x="1160" y="245.5" width="120" height="1" fill="#363636"/>
 <rect x="1233" y="249" width="16" height="1.5" fill="#3a3a3a"/>
 <rect x="1160" y="296" width="120" height="1" fill="#363636"/>
 <rect x="1233" y="299.5" width="16" height="1.5" fill="#3a3a3a"/>
 <rect x="1160" y="327" width="120" height="1" fill="#363636"/>
 <rect x="1233" y="330.5" width="16" height="1.5" fill="#3a3a3a"/>
 <rect x="1160" y="357.5" width="120" height="1" fill="#363636"/>
 <rect x="1164.5" y="183.4" width="113.5" height="15.5" fill="#343434"/>
 <!-- Seiten icon -->
 <path d="M1168 104.5 V96 C1168 93 1170 91.5 1173.5 91.5 V104.5 Z M1175.5 104.5 V91.5 C1179 91.5 1181 93 1181 96 V104.5 Z" fill="#c8c8c8"/>
 <rect x="1174.1" y="90" width="0.9" height="16" fill="#c8c8c8"/>
 <path d="M1170 93.5 L1171.5 95.5 M1179 93.5 L1177.5 95.5" stroke="#6a6a6a" stroke-width="0.8"/>
 <!-- Ebenen -->
 <path d="M1174.5 112.5 L1181 116.5 L1174.5 120.5 L1168 116.5 Z" fill="#c8c8c8"/>
 <path d="M1168 119.5 L1174.5 123.5 L1181 119.5" fill="none" stroke="#c8c8c8" stroke-width="1.4"/>
 <!-- links -->
 <g fill="none" stroke="#c8c8c8" stroke-width="1.3"><rect x="1168" y="137" width="8" height="5.5" rx="2.75"/><rect x="1173.5" y="137" width="8" height="5.5" rx="2.75"/></g>
 <!-- Kontur -->
 <g fill="#c8c8c8"><rect x="1168" y="165.5" width="13" height="1.3"/><rect x="1168" y="169.5" width="13" height="1.8"/><rect x="1168" y="174" width="13" height="2.2"/></g>
 <!-- Farbfelder -->
 <rect x="1168" y="186" width="13" height="11" fill="#c0c0c0"/>
 <path d="M1169.5 187.5 h3v3h-3z M1176.5 187.5 h3v3h-3z M1173 191 h3v3h-3z M1169.5 194 h3v2h-3z M1176.5 194 h3v2h-3z" fill="#666"/>
 <!-- Verlauf -->
 <defs><linearGradient id="gr2" x1="0" x2="1"><stop offset="0" stop-color="#333"/><stop offset="1" stop-color="#ddd"/></linearGradient></defs>
 <rect x="1168" y="207.5" width="13" height="10" fill="url(#gr2)" stroke="#a0a0a0" stroke-width="0.8"/>
 <!-- CC Libraries -->
 <rect x="1168.5" y="227" width="12" height="12" fill="none" stroke="#a8a8a8" stroke-width="1"/>
 <path d="M1170 237.5 V231.5 L1172 230.5 V232 L1174 230.5 V232 L1176 230.5 V232 L1178 230.5 V237.5 Z" fill="#a8a8a8"/>
 <!-- fx -->
 <text x="1168" y="268.5" font-family="Liberation Serif" font-style="italic" font-size="13" fill="#b0b0b0">fx</text>
 <!-- Objektformate -->
 <g fill="none" stroke="#b8b8b8" stroke-width="1.1"><path d="M1171 280.5 V279 L1173 277.5 H1180 L1181 279 V286 L1179 287.5 H1176"/><rect x="1168.5" y="283.5" width="5.5" height="5.5"/><rect x="1170.5" y="285.5" width="5.5" height="5.5" fill="#444"/></g>
 <!-- Absatzformate -->
 <g fill="none" stroke="#b8b8b8" stroke-width="1.1"><rect x="1168.5" y="314.5" width="5.5" height="5.5"/><rect x="1170.5" y="316.5" width="5.5" height="5.5" fill="#444"/></g>
 <path d="M1177 307.5 H1182 V318 M1179.5 307.5 V318" fill="none" stroke="#b8b8b8" stroke-width="1.1"/><circle cx="1177.5" cy="310.3" r="2.6" fill="#b8b8b8"/>
 <!-- Zeichenformate -->
 <g fill="none" stroke="#b8b8b8" stroke-width="1.1"><rect x="1168.5" y="345.5" width="5.5" height="5.5"/><rect x="1170.5" y="347.5" width="5.5" height="5.5" fill="#444"/><path d="M1175.5 346 L1179 337.5 L1182.5 346 M1176.8 343 H1181.2"/></g>
</svg>
<div class="lbl" style="left:1187.5px;top:94px;font-size:10px;color:#ececec">Seiten</div>
<div class="lbl" style="left:1187.5px;top:114.7px;font-size:10px;color:#ececec">Ebenen</div>
<div class="lbl" style="left:1187.5px;top:135.2px;font-size:10px;color:#ececec">Verknüpfungen</div>
<div class="lbl" style="left:1187.5px;top:166px;font-size:10px;color:#ececec">Kontur</div>
<div class="lbl" style="left:1187.5px;top:186.7px;font-size:10px;color:#ececec">Farbfelder</div>
<div class="lbl" style="left:1187.5px;top:207.5px;font-size:10px;color:#ececec">Verlauf</div>
<div class="lbl" style="left:1187.5px;top:228.5px;font-size:10px;color:#ececec">CC Libraries</div>
<div class="lbl" style="left:1187.5px;top:259px;font-size:10px;color:#ececec">Effekte</div>
<div class="lbl" style="left:1187.5px;top:279.7px;font-size:10px;color:#ececec">Objektformate</div>
<div class="lbl" style="left:1187.5px;top:310px;font-size:10px;color:#ececec">Absatzformate</div>
<div class="lbl" style="left:1187.5px;top:340.5px;font-size:10px;color:#ececec">Zeichenformate</div>

<svg class="a" style="left:980px;top:151px" width="180" height="292" viewBox="980 151 180 292"><rect x="980" y="151" width="179" height="290" fill="#3a3a3a"/>
<rect x="980.5" y="151.5" width="178" height="284" fill="#484848" stroke="#3a3a3a" stroke-width="1"/>
<rect x="981" y="152" width="177" height="21.5" fill="#3b3b3b"/>
<rect x="1003.4" y="152" width="63" height="21.5" fill="#484848"/>
<rect x="1069" y="153" width="1" height="20" fill="#333"/><rect x="1093" y="153" width="1" height="20" fill="#333"/><rect x="1116" y="153" width="1" height="20" fill="#333"/>
<path d="M1008.3 162 L1009.8 160.2 L1011.3 162 M1008.3 165 L1009.8 166.8 L1011.3 165" fill="none" stroke="#aaa" stroke-width="0.9"/>
<path d="M1128.5 161 L1130.5 163.3 L1128.5 165.6 M1131.8 161 L1133.8 163.3 L1131.8 165.6" fill="none" stroke="#d8d8d8" stroke-width="1.1"/>
<rect x="1141" y="159.5" width="1" height="8" fill="#777"/>
<rect x="1146.5" y="160" width="8" height="6.5" fill="#8a8a8a"/>
<rect x="993" y="186" width="14" height="14.5" fill="#fff" stroke="#333" stroke-width="0.6"/><rect x="997.5" y="191.5" width="6" height="6" fill="#1a1a1a"/><path d="M994 200 L1006.5 187" stroke="#b01020" stroke-width="1.5"/>
<rect x="985.5" y="179.5" width="14" height="14" fill="#c4061f"/>
<path d="M1002 181 a3 3 0 0 1 3 3 M1001.5 180 L1003 181 L1001.5 182" fill="none" stroke="#aaa" stroke-width="0.8"/>
<rect x="1014" y="182" width="13.5" height="14" fill="#2f2f2f"/><rect x="1017.5" y="185.5" width="6.5" height="7" fill="#777" stroke="#c0c0c0" stroke-width="1"/>
<rect x="1090.5" y="181.5" width="39" height="15" rx="1.5" fill="#3e3e3e" stroke="#585858" stroke-width="1"/><rect x="1116" y="182" width="1" height="14" fill="#585858"/>
<path d="M1121.8 186.5 L1124 189 L1121.8 191.5" fill="none" stroke="#e0e0e0" stroke-width="1.1"/>
<rect x="981" y="203" width="177" height="1" fill="#424242"/>
<rect x="994" y="207.00" width="9.5" height="9.5" fill="#fff" stroke="#222" stroke-width="0.6"/><path d="M994.5 216.20 L1003 207.40" stroke="#d0102a" stroke-width="1.4"/>
<path d="M1115.5 208.00 L1122.5 215.60 M1122.5 208.00 L1115.5 215.60" stroke="#a8a8a8" stroke-width="1.5"/>
<rect x="1139" y="207.30" width="9" height="9" rx="1.5" fill="#fff" stroke="#222" stroke-width="0.6"/><path d="M1140 215.30 L1147 208.30" stroke="#d0102a" stroke-width="1"/>
<rect x="994" y="223.38" width="9.5" height="9.5" fill="#000" stroke="#2a2a2a" stroke-width="0.6"/>
<path d="M1115.5 224.38 L1122.5 231.98 M1122.5 224.38 L1115.5 231.98" stroke="#a8a8a8" stroke-width="1.5"/>
<rect x="1139" y="223.68" width="9" height="9" fill="#9a9a9a"/><path d="M1140.5 225.18 h2.5v2.5h-2.5z M1144.5 225.18 h2.5v2.5h-2.5z M1140.5 228.98 h2.5v2.5h-2.5z M1144.5 228.98 h2.5v2.5h-2.5z" fill="#555"/>
<rect x="994" y="239.76" width="9.5" height="9.5" fill="#fff" stroke="#2a2a2a" stroke-width="0.6"/>
<rect x="994" y="256.14" width="9.5" height="9.5" fill="#000" stroke="#2a2a2a" stroke-width="0.6"/>
<path d="M1115.5 257.14 L1122.5 264.74 M1122.5 257.14 L1115.5 264.74" stroke="#a8a8a8" stroke-width="1.5"/>
<rect x="1127.3" y="256.64" width="8" height="8.2" rx="1" fill="#a0a0a0" stroke="#cfcfcf" stroke-width="1"/>
<rect x="1139.2" y="256.64" width="8.2" height="8.2" rx="1" fill="#f4f4f4" stroke="#e8e8e8" stroke-width="0.8"/><path d="M1139.8 257.44 L1143.3 260.74 L1139.8 264.04 Z" fill="#8fe4f0"/><path d="M1146.8 257.44 L1143.3 260.74 L1146.8 264.04 Z" fill="#f0ec90"/><path d="M1140.8 258.24 L1145.8 258.24 L1143.3 260.74 Z" fill="#a020b0"/><path d="M1140.8 263.44 L1145.8 263.44 L1143.3 260.74 Z" fill="#111"/>
<rect x="994" y="272.52" width="9.5" height="9.5" fill="#1b9ad6" stroke="#2a2a2a" stroke-width="0.6"/>
<rect x="1127.3" y="273.02" width="8" height="8.2" rx="1" fill="#a0a0a0" stroke="#cfcfcf" stroke-width="1"/>
<rect x="1139.2" y="273.02" width="8.2" height="8.2" rx="1" fill="#f4f4f4" stroke="#e8e8e8" stroke-width="0.8"/><path d="M1139.8 273.82 L1143.3 277.12 L1139.8 280.42 Z" fill="#8fe4f0"/><path d="M1146.8 273.82 L1143.3 277.12 L1146.8 280.42 Z" fill="#f0ec90"/><path d="M1140.8 274.62 L1145.8 274.62 L1143.3 277.12 Z" fill="#a020b0"/><path d="M1140.8 279.82 L1145.8 279.82 L1143.3 277.12 Z" fill="#111"/>
<rect x="994" y="288.90" width="9.5" height="9.5" fill="#d6007c" stroke="#2a2a2a" stroke-width="0.6"/>
<rect x="1127.3" y="289.40" width="8" height="8.2" rx="1" fill="#a0a0a0" stroke="#cfcfcf" stroke-width="1"/>
<rect x="1139.2" y="289.40" width="8.2" height="8.2" rx="1" fill="#f4f4f4" stroke="#e8e8e8" stroke-width="0.8"/><path d="M1139.8 290.20 L1143.3 293.50 L1139.8 296.80 Z" fill="#8fe4f0"/><path d="M1146.8 290.20 L1143.3 293.50 L1146.8 296.80 Z" fill="#f0ec90"/><path d="M1140.8 291.00 L1145.8 291.00 L1143.3 293.50 Z" fill="#a020b0"/><path d="M1140.8 296.20 L1145.8 296.20 L1143.3 293.50 Z" fill="#111"/>
<rect x="994" y="305.28" width="9.5" height="9.5" fill="#fff200" stroke="#2a2a2a" stroke-width="0.6"/>
<rect x="1127.3" y="305.78" width="8" height="8.2" rx="1" fill="#a0a0a0" stroke="#cfcfcf" stroke-width="1"/>
<rect x="1139.2" y="305.78" width="8.2" height="8.2" rx="1" fill="#f4f4f4" stroke="#e8e8e8" stroke-width="0.8"/><path d="M1139.8 306.58 L1143.3 309.88 L1139.8 313.18 Z" fill="#8fe4f0"/><path d="M1146.8 306.58 L1143.3 309.88 L1146.8 313.18 Z" fill="#f0ec90"/><path d="M1140.8 307.38 L1145.8 307.38 L1143.3 309.88 Z" fill="#a020b0"/><path d="M1140.8 312.58 L1145.8 312.58 L1143.3 309.88 Z" fill="#111"/>
<rect x="981" y="318.26" width="177" height="16.4" fill="#43617e"/>
<rect x="994" y="321.66" width="9.5" height="9.5" fill="#c4061f" stroke="#2a2a2a" stroke-width="0.6"/>
<rect x="1127.3" y="322.16" width="8" height="8.2" rx="1" fill="#a8bccc" stroke="#cfcfcf" stroke-width="1"/>
<rect x="1139.2" y="322.16" width="8.2" height="8.2" rx="1" fill="#f4f4f4" stroke="#e8e8e8" stroke-width="0.8"/><path d="M1139.8 322.96 L1143.3 326.26 L1139.8 329.56 Z" fill="#8fe4f0"/><path d="M1146.8 322.96 L1143.3 326.26 L1146.8 329.56 Z" fill="#f0ec90"/><path d="M1140.8 323.76 L1145.8 323.76 L1143.3 326.26 Z" fill="#a020b0"/><path d="M1140.8 328.96 L1145.8 328.96 L1143.3 326.26 Z" fill="#111"/>
<rect x="994" y="338.04" width="9.5" height="9.5" fill="#3aaa35" stroke="#2a2a2a" stroke-width="0.6"/>
<rect x="1127.3" y="338.54" width="8" height="8.2" rx="1" fill="#a0a0a0" stroke="#cfcfcf" stroke-width="1"/>
<rect x="1139.2" y="338.54" width="8.2" height="8.2" rx="1" fill="#f4f4f4" stroke="#e8e8e8" stroke-width="0.8"/><path d="M1139.8 339.34 L1143.3 342.64 L1139.8 345.94 Z" fill="#8fe4f0"/><path d="M1146.8 339.34 L1143.3 342.64 L1146.8 345.94 Z" fill="#f0ec90"/><path d="M1140.8 340.14 L1145.8 340.14 L1143.3 342.64 Z" fill="#a020b0"/><path d="M1140.8 345.34 L1145.8 345.34 L1143.3 342.64 Z" fill="#111"/>
<rect x="994" y="354.42" width="9.5" height="9.5" fill="#26378b" stroke="#2a2a2a" stroke-width="0.6"/>
<rect x="1127.3" y="354.92" width="8" height="8.2" rx="1" fill="#a0a0a0" stroke="#cfcfcf" stroke-width="1"/>
<rect x="1139.2" y="354.92" width="8.2" height="8.2" rx="1" fill="#f4f4f4" stroke="#e8e8e8" stroke-width="0.8"/><path d="M1139.8 355.72 L1143.3 359.02 L1139.8 362.32 Z" fill="#8fe4f0"/><path d="M1146.8 355.72 L1143.3 359.02 L1146.8 362.32 Z" fill="#f0ec90"/><path d="M1140.8 356.52 L1145.8 356.52 L1143.3 359.02 Z" fill="#a020b0"/><path d="M1140.8 361.72 L1145.8 361.72 L1143.3 359.02 Z" fill="#111"/>
<rect x="981" y="416.5" width="177" height="1" fill="#3e3e3e"/>
<g fill="#b8b8b8"><rect x="985.5" y="421" width="7" height="7"/><rect x="988.5" y="424" width="7" height="7" fill="#8a8a8a"/><path d="M985 427 L989 427 L989 425 L991.5 428 L989 431 L989 429 L985 429 Z" fill="#ddd"/></g>
<g fill="#b8b8b8"><rect x="1069" y="421.5" width="9" height="9"/><path d="M1070 422.5 h3v3h-3z M1074 426.5 h3v3h-3z" fill="#6a6a6a"/><rect x="1079" y="429" width="1.2" height="1.2"/></g>
<path d="M1090 422.5 H1094 L1095 423.5 H1100.5 V430.5 H1090 Z" fill="#b8b8b8"/>
<rect x="1111.5" y="421.5" width="9" height="9" fill="none" stroke="#b8b8b8" stroke-width="1"/><path d="M1116 423.5 V428.5 M1113.5 426 H1118.5" stroke="#d8d8d8" stroke-width="1.2"/>
<path d="M1132.5 423.5 H1141.5 M1135.5 423.5 V422 H1138.5 V423.5 M1133.5 424.5 H1140.5 L1140 431 H1134 Z" fill="#9a9a9a" stroke="#9a9a9a" stroke-width="0.6"/>
<rect x="1071" y="437.5" width="16" height="1.5" fill="#333"/></svg>
<div class="a" style="left:985px;top:152px;width:16.5px;height:21px;overflow:hidden"><div class="lbl" style="left:4px;top:7px;font-size:10px;color:#bdbdbd">Kor</div></div>
<div class="lbl" style="left:1015px;top:159px;font-size:10px;color:#f0f0f0">Farbfelder</div>
<div class="lbl" style="left:1075px;top:159px;font-size:10px;color:#bdbdbd">Ver</div>
<div class="t" style="left:1088px;top:153px;width:5px;height:20px;background:#3b3b3b"></div>
<div class="lbl" style="left:1097px;top:159px;font-size:10px;color:#bdbdbd">CC</div>
<div class="t" style="left:1033px;top:183px;font-family:'Liberation Serif',serif;font-size:11px;font-weight:bold;color:#7c7c7c">T</div>
<div class="lbl" style="left:1056px;top:184.5px;font-size:9.5px;color:#e8e8e8">Farbton:</div>
<div class="lbl" style="left:1094px;top:184.5px;font-size:9.5px;color:#f0f0f0">100</div>
<div class="lbl" style="left:1131px;top:184.5px;font-size:9.5px;color:#e8e8e8">%</div>
<div class="lbl" style="left:1009px;top:207.20px;font-size:9.2px;color:#ececec">[Ohne]</div>
<div class="lbl" style="left:1009px;top:223.58px;font-size:9.2px;color:#ececec">[Passermarken]</div>
<div class="lbl" style="left:1009px;top:239.96px;font-size:9.2px;color:#ececec">[Papier]</div>
<div class="lbl" style="left:1009px;top:256.34px;font-size:9.2px;color:#ececec">[Schwarz]</div>
<div class="lbl" style="left:1009px;top:272.72px;font-size:9.2px;color:#ececec">C=100 M=0 Y=0 K=0</div>
<div class="lbl" style="left:1009px;top:289.10px;font-size:9.2px;color:#ececec">C=0 M=100 Y=0 K=0</div>
<div class="lbl" style="left:1009px;top:305.48px;font-size:9.2px;color:#ececec">C=0 M=0 Y=100 K=0</div>
<div class="lbl" style="left:1009px;top:321.86px;font-size:9.8px;color:#d8ecff">C=15 M=100 Y=100 K=0</div>
<div class="lbl" style="left:1009px;top:338.24px;font-size:9.2px;color:#ececec">C=75 M=5 Y=100 K=0</div>
<div class="lbl" style="left:1009px;top:354.62px;font-size:9.2px;color:#ececec">C=100 M=90 Y=10 K=0</div>
<svg class="a" style="left:1100px;top:545px" width="170" height="170" viewBox="1100 545 170 170">
 <defs>
  <clipPath id="cc"><circle cx="1183.3" cy="628.6" r="77.2"/></clipPath>
  <linearGradient id="wall" x1="0" x2="1" y1="0" y2="0">
   <stop offset="0" stop-color="#8e8a86"/>
   <stop offset="0.3" stop-color="#9c9792"/>
   <stop offset="0.62" stop-color="#938980"/>
   <stop offset="0.8" stop-color="#8e7c6c"/>
   <stop offset="1" stop-color="#6a5a4c"/>
  </linearGradient>
  <linearGradient id="wallv" x1="0" x2="0" y1="0" y2="1">
   <stop offset="0" stop-color="#6e6e6e" stop-opacity="0.55"/>
   <stop offset="0.45" stop-color="#888" stop-opacity="0"/>
  </linearGradient>
  <radialGradient id="lamp" cx="0.5" cy="0.5" r="0.5">
   <stop offset="0" stop-color="#fff6d8"/>
   <stop offset="0.35" stop-color="#e0c090"/>
   <stop offset="1" stop-color="#8a7460" stop-opacity="0"/>
  </radialGradient>
  <linearGradient id="lap" x1="0" x2="1" y1="0" y2="1">
   <stop offset="0" stop-color="#b0aba4"/>
   <stop offset="1" stop-color="#8a8279"/>
  </linearGradient>
  <filter id="bl"><feGaussianBlur stdDeviation="0.9"/></filter>
 </defs>
 <g clip-path="url(#cc)">
  <rect x="1100" y="545" width="170" height="170" fill="url(#wall)"/>
  <rect x="1100" y="545" width="170" height="170" fill="url(#wallv)"/>
  <rect x="1100" y="628" width="50" height="18" fill="#b2aaa2" opacity="0.45" filter="url(#bl)"/>
  <circle cx="1253.5" cy="633.5" r="14" fill="url(#lamp)"/>
  <g filter="url(#bl)">
   <rect x="1239.5" y="606" width="2.2" height="80" fill="#2a2420"/>
   <rect x="1239.5" y="605.5" width="25" height="2.2" fill="#2a2420"/>
   <rect x="1239.5" y="645.5" width="25" height="2" fill="#3a3028"/>
   <rect x="1249" y="598" width="8" height="8" fill="#3e3e3e"/>
   <!-- shirt -->
   <path d="M1128 715 L1130 660 C1131 638 1140 628 1156 624 L1164 622 L1176 634 L1190 621 C1206 625 1217 633 1220 650 L1224 664 L1211 670 L1207 715 Z" fill="#585c5a"/>
   
   <!-- neck/face -->
   <path d="M1157 596 C1157 622 1162 637.5 1173 637.5 C1184.5 637.5 1189.5 621 1189.5 597 C1189.5 585 1182 580 1173 580 C1164 580 1157 585 1157 596 Z" fill="#c9a08c"/>
   <ellipse cx="1189.5" cy="609" rx="2.6" ry="4.8" fill="#bb8e7a"/>
   <path d="M1155.5 601 C1153 585 1160 574.5 1173 574.5 C1186 574.5 1192 584 1190.5 603 C1189 594 1186 590 1180 589 C1172 591 1163 589 1158 592 Z" fill="#4a3a30"/>
   <path d="M1163 630 C1168 636 1178 636 1183 630" fill="none" stroke="#a87a68" stroke-width="1" opacity="0.6"/>
   <path d="M1168 622 h9" stroke="#9a6a5c" stroke-width="1" opacity="0.6"/>
   <path d="M1162 632 L1172 650 L1178 640 L1185 650 L1190 630 L1180 640 Z" fill="#4a4e4c"/>
   <!-- arm -->
   <path d="M1208 660 L1221 656 L1227 680 L1222 694 L1196 696 L1193 684 L1214 680 Z" fill="#c49680"/>
   <rect x="1193" y="681" width="8.5" height="10" rx="2.5" fill="#2e2e2e"/>
   <circle cx="1197.2" cy="686" r="2.4" fill="#777"/>
   <path d="M1140 690 L1240 686 L1240 715 L1140 715 Z" fill="#c8ad88"/>
   <!-- hand -->
   <path d="M1156 692 C1162 684 1178 681 1194 683 L1196 695 L1166 702 C1157 702 1153 697 1156 692 Z" fill="#cea48c"/>
   <!-- laptop -->
   <path d="M1100 646 L1144 645 L1145.5 702 L1100 708 Z" fill="url(#lap)"/>
   <rect x="1100" y="644.5" width="45" height="1.5" fill="#bdb7b0"/>
  </g>
 </g>
</svg>

</body></html>
